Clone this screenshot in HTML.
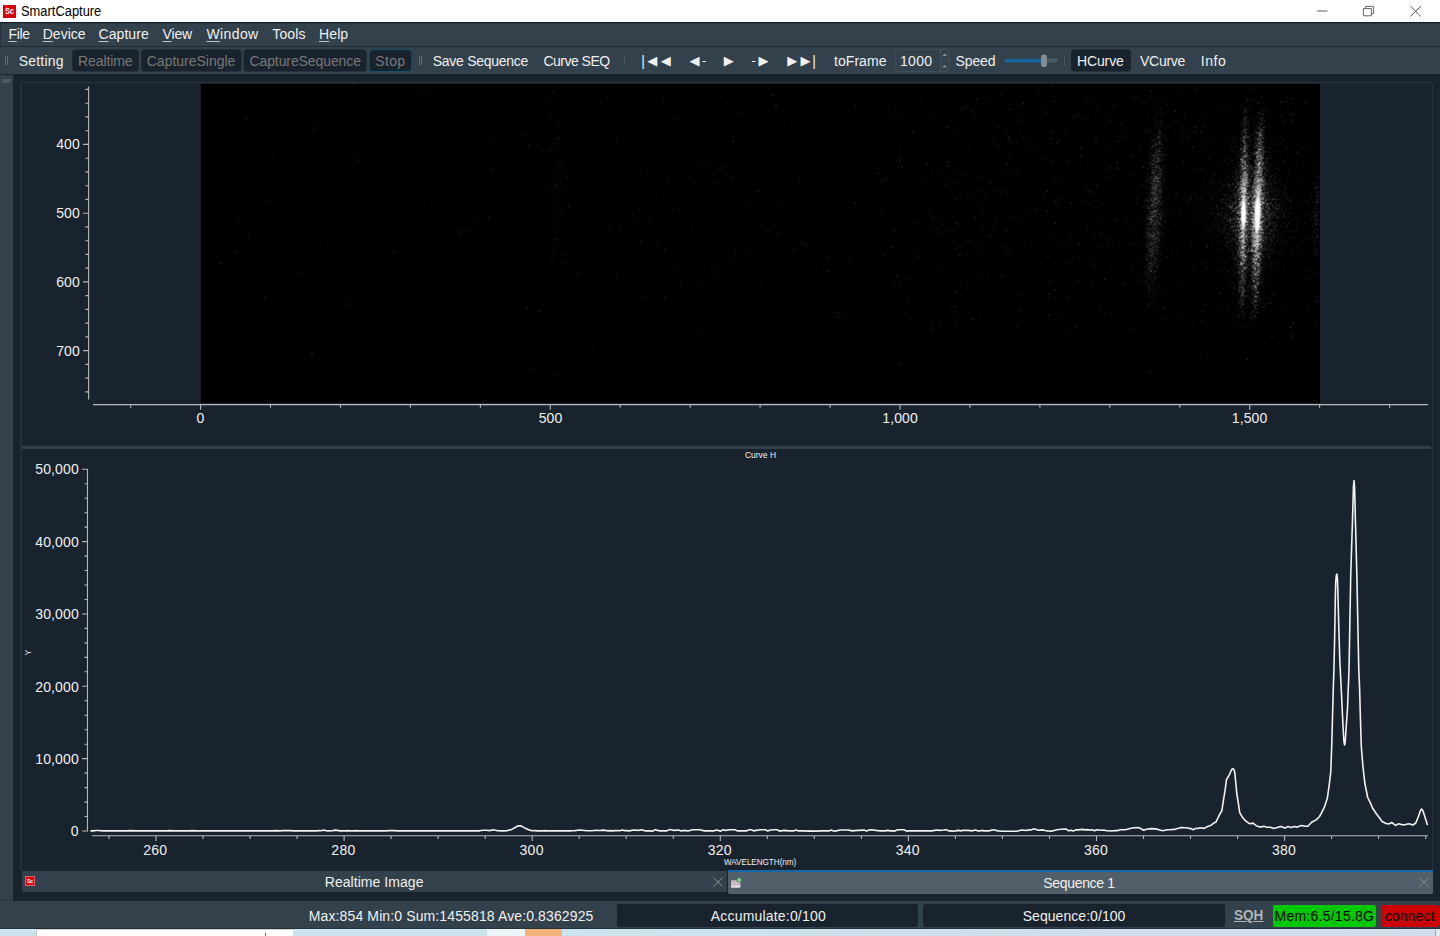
<!DOCTYPE html>
<html lang="en"><head><meta charset="utf-8"><title>SmartCapture</title>
<style>
*{box-sizing:border-box;margin:0;padding:0}
html,body{width:1440px;height:936px;overflow:hidden;background:#19232D;}
body{position:relative;font-family:"Liberation Sans",sans-serif;font-size:14px;color:#F0F0F0;}
.a{position:absolute;white-space:pre;line-height:1}
.d{color:#787878}
.k{color:#000}
.j{font-family:"DejaVu Sans",sans-serif;font-size:13px}
u{text-decoration-thickness:1px;text-underline-offset:1.5px;text-decoration-color:rgba(240,240,240,.75)}
svg{position:absolute;left:0;top:0}
</style></head><body>
<div class="a" style="left:0px;top:0px;width:1440px;height:22px;background:#fff;"></div><div class="a" style="left:0px;top:22px;width:1440px;height:1px;background:#161f27;"></div><div class="a" style="left:0px;top:23px;width:1440px;height:23px;background:#32414B;"></div><div class="a" style="left:0px;top:23px;width:1440px;height:1px;background:#2b3842;"></div><div class="a" style="left:0px;top:46px;width:1440px;height:1px;background:#1f2a33;"></div><div class="a" style="left:0px;top:47px;width:1440px;height:27px;background:#32414B;"></div><div class="a" style="left:0px;top:23px;width:1px;height:23px;background:#26323c;"></div><div class="a" style="left:3px;top:5px;width:13px;height:13px;background:#d9000d;"></div><div class="a" style="left:4.90px;top:7px;transform:scaleX(0.7814);transform-origin:0 0;font-size:9.3px;font-weight:bold;color:#fff;">Sc</div><div class="a k" style="left:20.61px;top:4px;transform:scaleX(0.9213);transform-origin:0 0;">SmartCapture</div>
<div class="a" style="left:0px;top:75px;width:13px;height:825px;background:#32414B;"></div><div class="a" style="left:0px;top:900px;width:13px;height:1px;background:#2b3742;"></div><div class="a" style="left:2px;top:79px;width:9px;height:4px;background:#4c575f;"></div><div class="a" style="left:20px;top:82px;width:1413px;height:790px;border:1px solid #27333e;border-radius:3px"></div><div class="a" style="left:22px;top:446px;width:1409px;height:3px;background:#323f4a;"></div>
<svg width="1440" height="936" viewBox="0 0 1440 936"><rect x="72.2" y="49.4" width="66.6" height="22.2" rx="3.5" fill="#19232D"/><rect x="141.3" y="49.4" width="100.1" height="22.2" rx="3.5" fill="#19232D"/><rect x="243.7" y="49.4" width="122.9" height="22.2" rx="3.5" fill="#19232D"/><rect x="369.2" y="49.7" width="42.6" height="21.8" rx="3.5" fill="#19232D" stroke="#14506E" stroke-width="1"/><rect x="895.7" y="49.2" width="53.2" height="22.2" rx="3" fill="none" stroke="#43525d" stroke-width="1"/><path d="M940.4 49.5V71.2M940.6 60.4H948.8" stroke="#43525d" stroke-width="1" fill="none"/><rect x="1071" y="49.4" width="60" height="22.2" rx="3.5" fill="#19232D"/><rect x="1040" y="58.4" width="17.3" height="4.4" rx="1.5" fill="#4c5c67"/><rect x="1004.8" y="58.9" width="38" height="3.5" rx="1.5" fill="#1464A0"/><rect x="1041" y="54.5" width="5.9" height="12.4" rx="2.6" fill="#868d93"/><path d="M1317 11h10.5" stroke="#666" stroke-width="1" fill="none"/><path d="M1363.4 8.6h8v7.2h-8zM1365.6 8.4v-2h8v7.2h-2" stroke="#555" stroke-width="0.9" fill="none"/><path d="M1410.5 6.2l10.3 10.2M1420.8 6.2l-10.3 10.2" stroke="#444" stroke-width="0.9" fill="none"/><path d="M942.1 56.1l2.5 -2.6l2.5 2.6zM942.1 67.4l2.5 -2.6l2.5 2.6z" fill="#8c8c8c"/><path d="M21.2 85.5V871" stroke="#242f3a" stroke-width="1.6" fill="none"/><rect x="200.8" y="84" width="1119.2" height="318.8" fill="#000"/><defs><radialGradient id="gA"><stop offset="0" stop-color="#fff" stop-opacity="0.04"/><stop offset="0.5" stop-color="#fff" stop-opacity="0.02"/><stop offset="1" stop-color="#fff" stop-opacity="0"/></radialGradient><radialGradient id="gB"><stop offset="0" stop-color="#fff" stop-opacity="0.1"/><stop offset="0.5" stop-color="#fff" stop-opacity="0.06"/><stop offset="1" stop-color="#fff" stop-opacity="0"/></radialGradient><radialGradient id="gC"><stop offset="0" stop-color="#fff" stop-opacity="0.12"/><stop offset="0.5" stop-color="#fff" stop-opacity="0.07"/><stop offset="1" stop-color="#fff" stop-opacity="0"/></radialGradient><radialGradient id="gK"><stop offset="0" stop-color="#fff" stop-opacity="1"/><stop offset="0.5" stop-color="#fff" stop-opacity="1"/><stop offset="0.75" stop-color="#fff" stop-opacity="0.5"/><stop offset="1" stop-color="#fff" stop-opacity="0"/></radialGradient><radialGradient id="gM"><stop offset="0" stop-color="#fff" stop-opacity="0.4"/><stop offset="0.5" stop-color="#fff" stop-opacity="0.24"/><stop offset="1" stop-color="#fff" stop-opacity="0"/></radialGradient><clipPath id="ic"><rect x="200.8" y="84" width="1119.2" height="318.8"/></clipPath></defs><g clip-path="url(#ic)"><ellipse cx="1154.8" cy="205" rx="8" ry="80" fill="url(#gA)" transform="rotate(2.6 1154.8 205)"/><ellipse cx="1243.6" cy="211" rx="6" ry="70" fill="url(#gB)" transform="rotate(1.0 1243.6 211)"/><ellipse cx="1257.8" cy="213" rx="7" ry="75" fill="url(#gC)" transform="rotate(1.7 1257.8 213)"/><ellipse cx="1243.6" cy="213" rx="3.2" ry="48" fill="url(#gM)" transform="rotate(1.0 1243.6 213)"/><ellipse cx="1257.6" cy="214" rx="3.8" ry="52" fill="url(#gM)" transform="rotate(1.7 1257.6 214)"/><ellipse cx="1243.6" cy="213.5" rx="2.9" ry="18" fill="url(#gK)" transform="rotate(1.0 1243.6 213.5)"/><ellipse cx="1257.6" cy="214" rx="3.5" ry="23" fill="url(#gK)" transform="rotate(1.7 1257.6 214)"/><path d="M965 89h.01M1039 90h.01M992 94h.01M1240 95h.01M721 97h.01M1087 98h.01M922 99h.01M1247 99h.01M1247 100h.01M1248 100h.01M1247 101h.01M1010 102h.01M1263 102h.01M1159 103h.01M1161 103h.01M1245 103h.01M1263 103h.01M1258 104h.01M488 105h.01M1158 105h.01M1167 105h.01M1260 105h.01M1278 105h.01M1245 106h.01M1249 106h.01M1155 107h.01M1247 107h.01M1259 107h.01M1161 108h.01M1243 108h.01M1244 108h.01M1246 108h.01M1264 108h.01M1157 109h.01M1160 109h.01M1243 109h.01M1249 109h.01M1262 109h.01M1264 109h.01M1161 110h.01M1244 110h.01M1261 111h.01M1156 112h.01M1164 112h.01M1244 112h.01M1245 112h.01M1259 112h.01M1156 113h.01M1158 113h.01M1161 113h.01M1162 113h.01M1165 113h.01M1244 113h.01M1247 113h.01M1258 113h.01M1259 113h.01M1260 113h.01M1156 114h.01M1242 114h.01M1245 114h.01M1260 114h.01M1261 114h.01M1263 114h.01M1264 114h.01M1157 115h.01M1160 115h.01M1161 115h.01M1163 115h.01M1260 115h.01M1148 116h.01M1261 116h.01M1247 117h.01M1257 117h.01M1259 117h.01M1263 117h.01M326 118h.01M1158 118h.01M1161 118h.01M1243 118h.01M1244 118h.01M1245 118h.01M1246 118h.01M1247 118h.01M1260 118h.01M1261 118h.01M1263 118h.01M1155 119h.01M1245 119h.01M1246 119h.01M1253 119h.01M1258 119h.01M1155 120h.01M1163 120h.01M1245 120h.01M1260 120h.01M1263 120h.01M558 121h.01M1160 121h.01M1162 121h.01M1245 121h.01M1247 121h.01M1248 121h.01M1249 121h.01M1255 121h.01M1257 121h.01M1261 121h.01M1265 121h.01M1152 122h.01M1160 122h.01M1161 122h.01M1241 122h.01M1244 122h.01M1247 122h.01M1258 122h.01M1261 122h.01M1262 122h.01M1264 122h.01M1244 123h.01M1245 123h.01M1254 123h.01M1261 123h.01M1262 123h.01M456 124h.01M558 124h.01M791 124h.01M1155 124h.01M1163 124h.01M1241 124h.01M1243 124h.01M1249 124h.01M1257 124h.01M1267 124h.01M1161 125h.01M1240 125h.01M1243 125h.01M1244 125h.01M1247 125h.01M1256 125h.01M1258 125h.01M1260 125h.01M996 126h.01M1156 126h.01M1242 126h.01M1243 126h.01M1244 126h.01M1247 126h.01M1249 126h.01M1252 126h.01M1258 126h.01M1160 127h.01M1161 127h.01M1242 127h.01M1245 127h.01M1248 127h.01M1259 127h.01M1261 127h.01M1263 127h.01M1269 127h.01M1162 128h.01M1164 128h.01M1245 128h.01M1246 128h.01M1261 128h.01M1263 128h.01M1264 128h.01M1312 128h.01M1165 129h.01M1192 129h.01M1249 129h.01M1256 129h.01M1258 129h.01M1262 129h.01M1265 129h.01M1007 130h.01M1151 130h.01M1158 130h.01M1160 130h.01M1161 130h.01M1242 130h.01M1247 130h.01M1249 130h.01M1250 130h.01M1262 130h.01M1158 131h.01M1162 131h.01M1242 131h.01M1245 131h.01M1254 131h.01M1256 131h.01M1261 131h.01M1262 131h.01M1263 131h.01M1154 132h.01M1160 132h.01M1161 132h.01M1185 132h.01M1241 132h.01M1242 132h.01M1243 132h.01M1253 132h.01M1257 132h.01M1258 132h.01M1259 132h.01M1264 132h.01M1270 132h.01M1019 133h.01M1151 133h.01M1152 133h.01M1155 133h.01M1159 133h.01M1161 133h.01M1248 133h.01M1249 133h.01M1250 133h.01M1256 133h.01M1259 133h.01M1158 134h.01M1159 134h.01M1160 134h.01M1260 134h.01M1261 134h.01M1265 134h.01M1295 134h.01M523 135h.01M1153 135h.01M1156 135h.01M1164 135h.01M1174 135h.01M1241 135h.01M1242 135h.01M1245 135h.01M1246 135h.01M1247 135h.01M1248 135h.01M1251 135h.01M1252 135h.01M1253 135h.01M1258 135h.01M1262 135h.01M1263 135h.01M948 136h.01M1143 136h.01M1157 136h.01M1158 136h.01M1161 136h.01M1248 136h.01M1256 136h.01M1257 136h.01M1263 136h.01M557 137h.01M1152 137h.01M1240 137h.01M1255 137h.01M1258 137h.01M1259 137h.01M1263 137h.01M1155 138h.01M1157 138h.01M1165 138h.01M1229 138h.01M1233 138h.01M1241 138h.01M1243 138h.01M1244 138h.01M1246 138h.01M1248 138h.01M1255 138h.01M1256 138h.01M559 139h.01M1155 139h.01M1156 139h.01M1158 139h.01M1250 139h.01M1254 139h.01M1255 139h.01M1256 139h.01M1257 139h.01M1151 140h.01M1152 140h.01M1154 140h.01M1159 140h.01M1160 140h.01M1161 140h.01M1163 140h.01M1167 140h.01M1244 140h.01M1249 140h.01M1250 140h.01M1254 140h.01M1255 140h.01M1257 140h.01M1259 140h.01M1263 140h.01M1153 141h.01M1154 141h.01M1157 141h.01M1159 141h.01M1236 141h.01M1241 141h.01M1242 141h.01M1245 141h.01M1251 141h.01M1252 141h.01M1255 141h.01M1263 141h.01M1264 141h.01M1156 142h.01M1158 142h.01M1231 142h.01M1234 142h.01M1246 142h.01M1247 142h.01M1249 142h.01M1255 142h.01M1257 142h.01M1258 142h.01M1264 142h.01M1013 143h.01M1152 143h.01M1160 143h.01M1161 143h.01M1234 143h.01M1246 143h.01M1247 143h.01M1263 143h.01M558 144h.01M1093 144h.01M1150 144h.01M1162 144h.01M1163 144h.01M1241 144h.01M1248 144h.01M1252 144h.01M1255 144h.01M1256 144h.01M1258 144h.01M1262 144h.01M1266 144h.01M602 145h.01M1157 145h.01M1162 145h.01M1163 145h.01M1241 145h.01M1244 145h.01M1246 145h.01M1247 145h.01M1253 145h.01M1255 145h.01M1256 145h.01M1259 145h.01M1264 145h.01M552 146h.01M1154 146h.01M1155 146h.01M1158 146h.01M1167 146h.01M1231 146h.01M1237 146h.01M1241 146h.01M1243 146h.01M1250 146h.01M1253 146h.01M1255 146h.01M1259 146h.01M1262 146h.01M1264 146h.01M1149 147h.01M1150 147h.01M1155 147h.01M1160 147h.01M1162 147h.01M1236 147h.01M1241 147h.01M1245 147h.01M1249 147h.01M1258 147h.01M1259 147h.01M1268 147h.01M1269 147h.01M557 148h.01M901 148h.01M1153 148h.01M1154 148h.01M1160 148h.01M1161 148h.01M1162 148h.01M1165 148h.01M1231 148h.01M1253 148h.01M1255 148h.01M1261 148h.01M1266 148h.01M1152 149h.01M1247 149h.01M1248 149h.01M1251 149h.01M1253 149h.01M1256 149h.01M1262 149h.01M1155 150h.01M1157 150h.01M1241 150h.01M1242 150h.01M1243 150h.01M1251 150h.01M1255 150h.01M1261 150h.01M555 151h.01M970 151h.01M1149 151h.01M1156 151h.01M1157 151h.01M1158 151h.01M1164 151h.01M1242 151h.01M1246 151h.01M1249 151h.01M1255 151h.01M1256 151h.01M1262 151h.01M1264 151h.01M1152 152h.01M1154 152h.01M1155 152h.01M1161 152h.01M1163 152h.01M1237 152h.01M1240 152h.01M1245 152h.01M1247 152h.01M1250 152h.01M1253 152h.01M1267 152h.01M1270 152h.01M563 153h.01M1144 153h.01M1151 153h.01M1155 153h.01M1156 153h.01M1159 153h.01M1239 153h.01M1248 153h.01M1253 153h.01M1254 153h.01M1268 153h.01M1149 154h.01M1150 154h.01M1152 154h.01M1155 154h.01M1158 154h.01M1161 154h.01M1166 154h.01M1235 154h.01M1238 154h.01M1252 154h.01M1255 154h.01M1262 154h.01M1153 155h.01M1155 155h.01M1160 155h.01M1161 155h.01M1164 155h.01M1165 155h.01M1168 155h.01M1230 155h.01M1237 155h.01M1250 155h.01M1251 155h.01M1252 155h.01M1265 155h.01M1267 155h.01M1150 156h.01M1156 156h.01M1161 156h.01M1239 156h.01M1241 156h.01M1258 156h.01M1264 156h.01M1270 156h.01M1281 156h.01M1149 157h.01M1151 157h.01M1152 157h.01M1155 157h.01M1156 157h.01M1158 157h.01M1162 157h.01M1164 157h.01M1238 157h.01M1239 157h.01M1241 157h.01M1249 157h.01M1251 157h.01M1256 157h.01M1259 157h.01M1271 157h.01M1160 158h.01M1161 158h.01M1240 158h.01M1242 158h.01M1249 158h.01M1253 158h.01M1265 158h.01M1266 158h.01M1269 158h.01M1271 158h.01M274 159h.01M1154 159h.01M1159 159h.01M1160 159h.01M1226 159h.01M1235 159h.01M1237 159h.01M1240 159h.01M1243 159h.01M1245 159h.01M1251 159h.01M1255 159h.01M1262 159h.01M1268 159h.01M558 160h.01M908 160h.01M1149 160h.01M1161 160h.01M1164 160h.01M1223 160h.01M1236 160h.01M1244 160h.01M1248 160h.01M1253 160h.01M1254 160h.01M1255 160h.01M1257 160h.01M1260 160h.01M1268 160h.01M1274 160h.01M558 161h.01M561 161h.01M1240 161h.01M1246 161h.01M1247 161h.01M1254 161h.01M1264 161h.01M1266 161h.01M1267 161h.01M1273 161h.01M1150 162h.01M1151 162h.01M1152 162h.01M1155 162h.01M1157 162h.01M1159 162h.01M1225 162h.01M1239 162h.01M1240 162h.01M1247 162h.01M1248 162h.01M1249 162h.01M1254 162h.01M1261 162h.01M1265 162h.01M1268 162h.01M1283 162h.01M560 163h.01M1147 163h.01M1155 163h.01M1237 163h.01M1238 163h.01M1241 163h.01M1248 163h.01M1249 163h.01M1253 163h.01M1267 163h.01M1279 163h.01M559 164h.01M1087 164h.01M1151 164h.01M1154 164h.01M1155 164h.01M1158 164h.01M1162 164h.01M1229 164h.01M1244 164h.01M1247 164h.01M1248 164h.01M1249 164h.01M1264 164h.01M1267 164h.01M1272 164h.01M1221 165h.01M1239 165h.01M1242 165h.01M1248 165h.01M1250 165h.01M1252 165h.01M1254 165h.01M1263 165h.01M1264 165h.01M559 166h.01M725 166h.01M1154 166h.01M1160 166h.01M1165 166h.01M1228 166h.01M1234 166h.01M1239 166h.01M1240 166h.01M1248 166h.01M1249 166h.01M1252 166h.01M1257 166h.01M1262 166h.01M1267 166h.01M1269 166h.01M1271 166h.01M1316 166h.01M1111 167h.01M1151 167h.01M1152 167h.01M1155 167h.01M1162 167h.01M1164 167h.01M1250 167h.01M1253 167h.01M1254 167h.01M1262 167h.01M1265 167h.01M1268 167h.01M557 168h.01M563 168h.01M704 168h.01M1148 168h.01M1149 168h.01M1151 168h.01M1152 168h.01M1231 168h.01M1237 168h.01M1247 168h.01M1251 168h.01M1252 168h.01M1255 168h.01M1257 168h.01M1258 168h.01M1263 168h.01M1267 168h.01M1270 168h.01M1278 168h.01M1309 168h.01M1315 168h.01M322 169h.01M995 169h.01M1148 169h.01M1153 169h.01M1162 169h.01M1163 169h.01M1237 169h.01M1246 169h.01M1247 169h.01M1250 169h.01M1252 169h.01M1256 169h.01M1263 169h.01M1264 169h.01M1265 169h.01M1275 169h.01M1151 170h.01M1154 170h.01M1155 170h.01M1161 170h.01M1162 170h.01M1237 170h.01M1243 170h.01M1251 170h.01M1252 170h.01M1256 170h.01M1261 170h.01M1268 170h.01M1273 170h.01M553 171h.01M932 171h.01M956 171h.01M1156 171h.01M1158 171h.01M1161 171h.01M1165 171h.01M1233 171h.01M1239 171h.01M1240 171h.01M1243 171h.01M1244 171h.01M1247 171h.01M1250 171h.01M1254 171h.01M1260 171h.01M1264 171h.01M1266 171h.01M1158 172h.01M1163 172h.01M1235 172h.01M1247 172h.01M1248 172h.01M1250 172h.01M1255 172h.01M1260 172h.01M1269 172h.01M1272 172h.01M1274 172h.01M1289 172h.01M1148 173h.01M1152 173h.01M1155 173h.01M1159 173h.01M1161 173h.01M1162 173h.01M1164 173h.01M1227 173h.01M1233 173h.01M1234 173h.01M1235 173h.01M1236 173h.01M1238 173h.01M1242 173h.01M1248 173h.01M1250 173h.01M1251 173h.01M1252 173h.01M1253 173h.01M1254 173h.01M1275 173h.01M1276 173h.01M491 174h.01M1148 174h.01M1152 174h.01M1156 174h.01M1159 174h.01M1161 174h.01M1162 174h.01M1236 174h.01M1237 174h.01M1244 174h.01M1250 174h.01M1254 174h.01M1263 174h.01M1266 174h.01M1269 174h.01M1315 174h.01M560 175h.01M1153 175h.01M1155 175h.01M1158 175h.01M1162 175h.01M1235 175h.01M1240 175h.01M1241 175h.01M1246 175h.01M1264 175h.01M1265 175h.01M1272 175h.01M1137 176h.01M1147 176h.01M1148 176h.01M1151 176h.01M1152 176h.01M1154 176h.01M1163 176h.01M1226 176h.01M1233 176h.01M1236 176h.01M1237 176h.01M1239 176h.01M1244 176h.01M1247 176h.01M1250 176h.01M1252 176h.01M1253 176h.01M1254 176h.01M1259 176h.01M1275 176h.01M1317 176h.01M1319 176h.01M556 177h.01M559 177h.01M1108 177h.01M1148 177h.01M1152 177h.01M1154 177h.01M1160 177h.01M1163 177h.01M1228 177h.01M1229 177h.01M1233 177h.01M1236 177h.01M1249 177h.01M1267 177h.01M1269 177h.01M1270 177h.01M1272 177h.01M1301 177h.01M1317 177h.01M563 178h.01M1147 178h.01M1150 178h.01M1155 178h.01M1159 178h.01M1234 178h.01M1236 178h.01M1237 178h.01M1240 178h.01M1242 178h.01M1249 178h.01M1252 178h.01M1260 178h.01M1263 178h.01M1266 178h.01M1271 178h.01M1286 178h.01M1319 178h.01M557 179h.01M1149 179h.01M1150 179h.01M1151 179h.01M1152 179h.01M1163 179h.01M1164 179h.01M1234 179h.01M1240 179h.01M1251 179h.01M1252 179h.01M1264 179h.01M1265 179h.01M1273 179h.01M1276 179h.01M1281 179h.01M558 180h.01M1147 180h.01M1152 180h.01M1154 180h.01M1155 180h.01M1156 180h.01M1234 180h.01M1246 180h.01M1251 180h.01M1254 180h.01M1264 180h.01M1268 180h.01M1269 180h.01M1270 180h.01M1277 180h.01M1285 180h.01M988 181h.01M1063 181h.01M1088 181h.01M1148 181h.01M1149 181h.01M1152 181h.01M1153 181h.01M1161 181h.01M1163 181h.01M1165 181h.01M1205 181h.01M1239 181h.01M1245 181h.01M1251 181h.01M1255 181h.01M1256 181h.01M1261 181h.01M1266 181h.01M1319 181h.01M555 182h.01M1147 182h.01M1152 182h.01M1156 182h.01M1159 182h.01M1220 182h.01M1225 182h.01M1227 182h.01M1232 182h.01M1233 182h.01M1237 182h.01M1244 182h.01M1248 182h.01M1250 182h.01M1252 182h.01M1258 182h.01M1262 182h.01M1266 182h.01M1271 182h.01M1274 182h.01M1275 182h.01M1281 182h.01M1316 182h.01M800 183h.01M1148 183h.01M1158 183h.01M1159 183h.01M1162 183h.01M1220 183h.01M1228 183h.01M1233 183h.01M1237 183h.01M1238 183h.01M1242 183h.01M1254 183h.01M1256 183h.01M1269 183h.01M1272 183h.01M1274 183h.01M1277 183h.01M1298 183h.01M1313 183h.01M1317 183h.01M560 184h.01M1154 184h.01M1155 184h.01M1157 184h.01M1159 184h.01M1160 184h.01M1161 184h.01M1211 184h.01M1214 184h.01M1223 184h.01M1228 184h.01M1232 184h.01M1235 184h.01M1240 184h.01M1247 184h.01M1250 184h.01M1252 184h.01M1253 184h.01M1255 184h.01M1259 184h.01M1265 184h.01M1268 184h.01M1284 184h.01M1299 184h.01M1154 185h.01M1156 185h.01M1160 185h.01M1161 185h.01M1164 185h.01M1223 185h.01M1225 185h.01M1233 185h.01M1236 185h.01M1237 185h.01M1267 185h.01M1268 185h.01M1271 185h.01M1272 185h.01M1275 185h.01M1281 185h.01M1284 185h.01M1286 185h.01M1291 185h.01M1317 185h.01M1150 186h.01M1152 186h.01M1154 186h.01M1155 186h.01M1156 186h.01M1160 186h.01M1162 186h.01M1163 186h.01M1215 186h.01M1222 186h.01M1226 186h.01M1229 186h.01M1230 186h.01M1233 186h.01M1238 186h.01M1242 186h.01M1245 186h.01M1248 186h.01M1251 186h.01M1252 186h.01M1257 186h.01M1262 186h.01M1265 186h.01M1266 186h.01M1272 186h.01M1147 187h.01M1149 187h.01M1155 187h.01M1164 187h.01M1201 187h.01M1222 187h.01M1228 187h.01M1229 187h.01M1237 187h.01M1242 187h.01M1251 187h.01M1263 187h.01M1269 187h.01M1271 187h.01M1272 187h.01M1276 187h.01M1278 187h.01M1285 187h.01M1315 187h.01M1316 187h.01M1317 187h.01M1318 187h.01M557 188h.01M558 188h.01M563 188h.01M1083 188h.01M1152 188h.01M1154 188h.01M1158 188h.01M1161 188h.01M1206 188h.01M1228 188h.01M1229 188h.01M1234 188h.01M1236 188h.01M1248 188h.01M1278 188h.01M1286 188h.01M1315 188h.01M1316 188h.01M1317 188h.01M1318 188h.01M551 189h.01M1150 189h.01M1151 189h.01M1154 189h.01M1156 189h.01M1157 189h.01M1159 189h.01M1167 189h.01M1221 189h.01M1222 189h.01M1225 189h.01M1237 189h.01M1247 189h.01M1249 189h.01M1251 189h.01M1268 189h.01M1269 189h.01M1271 189h.01M1274 189h.01M1276 189h.01M1287 189h.01M1316 189h.01M1151 190h.01M1162 190h.01M1237 190h.01M1250 190h.01M1265 190h.01M1266 190h.01M1274 190h.01M1285 190h.01M981 191h.01M1153 191h.01M1155 191h.01M1158 191h.01M1159 191h.01M1220 191h.01M1226 191h.01M1234 191h.01M1238 191h.01M1239 191h.01M1252 191h.01M1258 191h.01M1265 191h.01M1268 191h.01M1270 191h.01M1272 191h.01M1273 191h.01M1280 191h.01M1317 191h.01M1318 191h.01M561 192h.01M1149 192h.01M1157 192h.01M1163 192h.01M1231 192h.01M1240 192h.01M1248 192h.01M1272 192h.01M1274 192h.01M1285 192h.01M1318 192h.01M1150 193h.01M1151 193h.01M1155 193h.01M1157 193h.01M1202 193h.01M1218 193h.01M1228 193h.01M1250 193h.01M1269 193h.01M1272 193h.01M1278 193h.01M1279 193h.01M1284 193h.01M1285 193h.01M1286 193h.01M1294 193h.01M1315 193h.01M1145 194h.01M1152 194h.01M1213 194h.01M1215 194h.01M1221 194h.01M1223 194h.01M1224 194h.01M1235 194h.01M1238 194h.01M1243 194h.01M1246 194h.01M1248 194h.01M1251 194h.01M1254 194h.01M1256 194h.01M1265 194h.01M1266 194h.01M1276 194h.01M1280 194h.01M1287 194h.01M1317 194h.01M1318 194h.01M1148 195h.01M1150 195h.01M1152 195h.01M1153 195h.01M1154 195h.01M1161 195h.01M1208 195h.01M1211 195h.01M1228 195h.01M1229 195h.01M1230 195h.01M1233 195h.01M1247 195h.01M1260 195h.01M1265 195h.01M1268 195h.01M1272 195h.01M1275 195h.01M1279 195h.01M1285 195h.01M1318 195h.01M1319 195h.01M657 196h.01M1056 196h.01M1146 196h.01M1152 196h.01M1153 196h.01M1157 196h.01M1161 196h.01M1163 196h.01M1224 196h.01M1225 196h.01M1231 196h.01M1236 196h.01M1239 196h.01M1240 196h.01M1241 196h.01M1261 196h.01M1264 196h.01M1267 196h.01M1268 196h.01M1269 196h.01M1272 196h.01M1275 196h.01M1278 196h.01M1283 196h.01M1284 196h.01M1287 196h.01M1288 196h.01M1294 196h.01M1317 196h.01M1318 196h.01M1319 196h.01M559 197h.01M1149 197h.01M1150 197h.01M1153 197h.01M1154 197h.01M1156 197h.01M1159 197h.01M1160 197h.01M1204 197h.01M1210 197h.01M1216 197h.01M1231 197h.01M1233 197h.01M1234 197h.01M1261 197h.01M1264 197h.01M1268 197h.01M1273 197h.01M1274 197h.01M1281 197h.01M1317 197h.01M1318 197h.01M557 198h.01M1148 198h.01M1149 198h.01M1150 198h.01M1151 198h.01M1152 198h.01M1154 198h.01M1156 198h.01M1159 198h.01M1226 198h.01M1228 198h.01M1258 198h.01M1260 198h.01M1269 198h.01M1274 198h.01M1279 198h.01M1286 198h.01M1287 198h.01M1291 198h.01M1044 199h.01M1147 199h.01M1152 199h.01M1153 199h.01M1154 199h.01M1157 199h.01M1223 199h.01M1227 199h.01M1229 199h.01M1231 199h.01M1235 199h.01M1236 199h.01M1238 199h.01M1264 199h.01M1267 199h.01M1271 199h.01M1272 199h.01M1275 199h.01M1280 199h.01M1288 199h.01M1290 199h.01M1295 199h.01M1317 199h.01M1318 199h.01M835 200h.01M1084 200h.01M1106 200h.01M1147 200h.01M1151 200h.01M1154 200h.01M1158 200h.01M1217 200h.01M1221 200h.01M1222 200h.01M1226 200h.01M1228 200h.01M1231 200h.01M1237 200h.01M1239 200h.01M1251 200h.01M1252 200h.01M1254 200h.01M1261 200h.01M1275 200h.01M1279 200h.01M1286 200h.01M1287 200h.01M1316 200h.01M1318 200h.01M556 201h.01M1146 201h.01M1153 201h.01M1156 201h.01M1158 201h.01M1162 201h.01M1163 201h.01M1214 201h.01M1221 201h.01M1224 201h.01M1243 201h.01M1253 201h.01M1265 201h.01M1266 201h.01M1269 201h.01M1270 201h.01M1272 201h.01M1275 201h.01M1283 201h.01M1292 201h.01M1319 201h.01M562 202h.01M1147 202h.01M1159 202h.01M1161 202h.01M1162 202h.01M1225 202h.01M1227 202h.01M1235 202h.01M1236 202h.01M1248 202h.01M1249 202h.01M1251 202h.01M1263 202h.01M1266 202h.01M1267 202h.01M1269 202h.01M1270 202h.01M1271 202h.01M1276 202h.01M1283 202h.01M1290 202h.01M1305 202h.01M1318 202h.01M1319 202h.01M811 203h.01M1149 203h.01M1151 203h.01M1154 203h.01M1158 203h.01M1160 203h.01M1162 203h.01M1193 203h.01M1202 203h.01M1221 203h.01M1224 203h.01M1226 203h.01M1227 203h.01M1229 203h.01M1232 203h.01M1242 203h.01M1251 203h.01M1261 203h.01M1266 203h.01M1274 203h.01M1275 203h.01M1276 203h.01M1279 203h.01M1283 203h.01M1287 203h.01M1316 203h.01M1319 203h.01M431 204h.01M554 204h.01M1149 204h.01M1158 204h.01M1160 204h.01M1220 204h.01M1222 204h.01M1227 204h.01M1229 204h.01M1231 204h.01M1232 204h.01M1237 204h.01M1238 204h.01M1251 204h.01M1264 204h.01M1271 204h.01M1274 204h.01M1308 204h.01M1316 204h.01M1038 205h.01M1147 205h.01M1151 205h.01M1154 205h.01M1159 205h.01M1162 205h.01M1163 205h.01M1166 205h.01M1228 205h.01M1230 205h.01M1234 205h.01M1242 205h.01M1250 205h.01M1251 205h.01M1264 205h.01M1268 205h.01M1276 205h.01M1277 205h.01M1279 205h.01M1282 205h.01M1289 205h.01M1315 205h.01M1318 205h.01M680 206h.01M1148 206h.01M1152 206h.01M1156 206h.01M1158 206h.01M1195 206h.01M1210 206h.01M1222 206h.01M1232 206h.01M1233 206h.01M1237 206h.01M1245 206h.01M1249 206h.01M1251 206h.01M1261 206h.01M1264 206h.01M1267 206h.01M1276 206h.01M1277 206h.01M1279 206h.01M1282 206h.01M1066 207h.01M1152 207h.01M1154 207h.01M1156 207h.01M1206 207h.01M1217 207h.01M1222 207h.01M1226 207h.01M1227 207h.01M1228 207h.01M1237 207h.01M1239 207h.01M1241 207h.01M1249 207h.01M1261 207h.01M1263 207h.01M1267 207h.01M1268 207h.01M1273 207h.01M1274 207h.01M1279 207h.01M1280 207h.01M1291 207h.01M1297 207h.01M552 208h.01M996 208h.01M1050 208h.01M1147 208h.01M1148 208h.01M1150 208h.01M1151 208h.01M1157 208h.01M1163 208h.01M1211 208h.01M1214 208h.01M1223 208h.01M1225 208h.01M1233 208h.01M1234 208h.01M1235 208h.01M1237 208h.01M1239 208h.01M1245 208h.01M1246 208h.01M1248 208h.01M1253 208h.01M1265 208h.01M1270 208h.01M1282 208h.01M1286 208h.01M1291 208h.01M1294 208h.01M1316 208h.01M1317 208h.01M1149 209h.01M1152 209h.01M1160 209h.01M1168 209h.01M1218 209h.01M1225 209h.01M1227 209h.01M1231 209h.01M1233 209h.01M1236 209h.01M1239 209h.01M1264 209h.01M1266 209h.01M1272 209h.01M1273 209h.01M1275 209h.01M1282 209h.01M1314 209h.01M555 210h.01M662 210h.01M929 210h.01M1148 210h.01M1149 210h.01M1154 210h.01M1155 210h.01M1156 210h.01M1209 210h.01M1218 210h.01M1224 210h.01M1227 210h.01M1229 210h.01M1231 210h.01M1238 210h.01M1241 210h.01M1242 210h.01M1246 210h.01M1263 210h.01M1265 210h.01M1269 210h.01M1283 210h.01M553 211h.01M561 211h.01M1148 211h.01M1149 211h.01M1152 211h.01M1153 211h.01M1163 211h.01M1169 211h.01M1206 211h.01M1227 211h.01M1229 211h.01M1232 211h.01M1240 211h.01M1243 211h.01M1248 211h.01M1249 211h.01M1268 211h.01M1272 211h.01M1278 211h.01M1286 211h.01M1314 211h.01M1315 211h.01M1317 211h.01M1319 211h.01M1144 212h.01M1154 212h.01M1155 212h.01M1157 212h.01M1162 212h.01M1163 212h.01M1224 212h.01M1226 212h.01M1231 212h.01M1237 212h.01M1239 212h.01M1245 212h.01M1246 212h.01M1250 212h.01M1253 212h.01M1254 212h.01M1255 212h.01M1262 212h.01M1264 212h.01M1269 212h.01M1275 212h.01M1276 212h.01M1281 212h.01M1284 212h.01M1316 212h.01M1031 213h.01M1033 213h.01M1058 213h.01M1148 213h.01M1150 213h.01M1153 213h.01M1154 213h.01M1155 213h.01M1156 213h.01M1158 213h.01M1159 213h.01M1160 213h.01M1162 213h.01M1167 213h.01M1171 213h.01M1210 213h.01M1212 213h.01M1214 213h.01M1219 213h.01M1222 213h.01M1234 213h.01M1251 213h.01M1265 213h.01M1267 213h.01M1269 213h.01M1270 213h.01M1274 213h.01M1275 213h.01M1276 213h.01M1284 213h.01M1289 213h.01M1290 213h.01M1293 213h.01M1312 213h.01M557 214h.01M1155 214h.01M1157 214h.01M1159 214h.01M1162 214h.01M1163 214h.01M1206 214h.01M1208 214h.01M1209 214h.01M1234 214h.01M1236 214h.01M1238 214h.01M1245 214h.01M1250 214h.01M1259 214h.01M1263 214h.01M1265 214h.01M1266 214h.01M1267 214h.01M1270 214h.01M1272 214h.01M1275 214h.01M1280 214h.01M1291 214h.01M1307 214h.01M1312 214h.01M1315 214h.01M1317 214h.01M1319 214h.01M824 215h.01M1146 215h.01M1148 215h.01M1149 215h.01M1153 215h.01M1156 215h.01M1163 215h.01M1180 215h.01M1193 215h.01M1214 215h.01M1220 215h.01M1222 215h.01M1225 215h.01M1229 215h.01M1238 215h.01M1241 215h.01M1249 215h.01M1252 215h.01M1254 215h.01M1262 215h.01M1263 215h.01M1270 215h.01M1271 215h.01M1277 215h.01M1284 215h.01M1315 215h.01M1317 215h.01M1150 216h.01M1202 216h.01M1218 216h.01M1221 216h.01M1223 216h.01M1225 216h.01M1226 216h.01M1234 216h.01M1238 216h.01M1239 216h.01M1240 216h.01M1247 216h.01M1262 216h.01M1266 216h.01M1269 216h.01M1271 216h.01M1272 216h.01M1274 216h.01M1275 216h.01M1276 216h.01M1283 216h.01M1290 216h.01M1038 217h.01M1149 217h.01M1156 217h.01M1161 217h.01M1162 217h.01M1208 217h.01M1215 217h.01M1226 217h.01M1229 217h.01M1238 217h.01M1250 217h.01M1254 217h.01M1265 217h.01M1266 217h.01M1267 217h.01M1272 217h.01M1275 217h.01M1279 217h.01M1284 217h.01M1285 217h.01M1286 217h.01M1295 217h.01M1312 217h.01M1314 217h.01M1124 218h.01M1142 218h.01M1147 218h.01M1148 218h.01M1149 218h.01M1150 218h.01M1152 218h.01M1155 218h.01M1158 218h.01M1162 218h.01M1174 218h.01M1218 218h.01M1220 218h.01M1224 218h.01M1228 218h.01M1230 218h.01M1235 218h.01M1239 218h.01M1251 218h.01M1254 218h.01M1262 218h.01M1266 218h.01M1269 218h.01M1270 218h.01M1279 218h.01M1283 218h.01M1288 218h.01M1149 219h.01M1150 219h.01M1157 219h.01M1158 219h.01M1160 219h.01M1161 219h.01M1221 219h.01M1222 219h.01M1223 219h.01M1225 219h.01M1229 219h.01M1235 219h.01M1237 219h.01M1243 219h.01M1245 219h.01M1254 219h.01M1257 219h.01M1260 219h.01M1261 219h.01M1265 219h.01M1267 219h.01M1315 219h.01M1316 219h.01M1317 219h.01M558 220h.01M1151 220h.01M1156 220h.01M1159 220h.01M1164 220h.01M1200 220h.01M1215 220h.01M1223 220h.01M1224 220h.01M1227 220h.01M1228 220h.01M1231 220h.01M1233 220h.01M1234 220h.01M1240 220h.01M1248 220h.01M1249 220h.01M1252 220h.01M1256 220h.01M1258 220h.01M1263 220h.01M1272 220h.01M1287 220h.01M1292 220h.01M1294 220h.01M1298 220h.01M1311 220h.01M1314 220h.01M1316 220h.01M1023 221h.01M1150 221h.01M1155 221h.01M1156 221h.01M1159 221h.01M1161 221h.01M1218 221h.01M1232 221h.01M1233 221h.01M1238 221h.01M1246 221h.01M1250 221h.01M1269 221h.01M1272 221h.01M1273 221h.01M1279 221h.01M1281 221h.01M1315 221h.01M1316 221h.01M1318 221h.01M1319 221h.01M925 222h.01M1144 222h.01M1149 222h.01M1152 222h.01M1153 222h.01M1158 222h.01M1159 222h.01M1160 222h.01M1163 222h.01M1213 222h.01M1221 222h.01M1222 222h.01M1224 222h.01M1227 222h.01M1230 222h.01M1231 222h.01M1243 222h.01M1263 222h.01M1265 222h.01M1268 222h.01M1274 222h.01M1282 222h.01M1298 222h.01M1316 222h.01M1318 222h.01M554 223h.01M559 223h.01M915 223h.01M1149 223h.01M1153 223h.01M1154 223h.01M1158 223h.01M1198 223h.01M1212 223h.01M1217 223h.01M1224 223h.01M1230 223h.01M1238 223h.01M1242 223h.01M1246 223h.01M1248 223h.01M1249 223h.01M1262 223h.01M1265 223h.01M1266 223h.01M1269 223h.01M1271 223h.01M1272 223h.01M1273 223h.01M1274 223h.01M1275 223h.01M1276 223h.01M1278 223h.01M1316 223h.01M1149 224h.01M1150 224h.01M1157 224h.01M1188 224h.01M1220 224h.01M1224 224h.01M1226 224h.01M1231 224h.01M1234 224h.01M1237 224h.01M1245 224h.01M1249 224h.01M1251 224h.01M1260 224h.01M1268 224h.01M1276 224h.01M1288 224h.01M1294 224h.01M1318 224h.01M1319 224h.01M560 225h.01M1145 225h.01M1148 225h.01M1149 225h.01M1151 225h.01M1157 225h.01M1163 225h.01M1175 225h.01M1220 225h.01M1224 225h.01M1225 225h.01M1233 225h.01M1236 225h.01M1263 225h.01M1265 225h.01M1268 225h.01M1269 225h.01M1271 225h.01M1274 225h.01M1276 225h.01M1277 225h.01M1278 225h.01M1313 225h.01M1316 225h.01M1317 225h.01M1319 225h.01M983 226h.01M1154 226h.01M1212 226h.01M1225 226h.01M1235 226h.01M1239 226h.01M1242 226h.01M1245 226h.01M1247 226h.01M1249 226h.01M1250 226h.01M1263 226h.01M1265 226h.01M1268 226h.01M1273 226h.01M1274 226h.01M1276 226h.01M1282 226h.01M1286 226h.01M1298 226h.01M1312 226h.01M1313 226h.01M1316 226h.01M556 227h.01M1151 227h.01M1152 227h.01M1154 227h.01M1158 227h.01M1225 227h.01M1228 227h.01M1230 227h.01M1231 227h.01M1236 227h.01M1237 227h.01M1240 227h.01M1246 227h.01M1248 227h.01M1249 227h.01M1252 227h.01M1256 227h.01M1265 227h.01M1266 227h.01M1279 227h.01M1287 227h.01M692 228h.01M955 228h.01M1147 228h.01M1149 228h.01M1150 228h.01M1152 228h.01M1153 228h.01M1154 228h.01M1156 228h.01M1157 228h.01M1162 228h.01M1212 228h.01M1225 228h.01M1230 228h.01M1237 228h.01M1251 228h.01M1263 228h.01M1264 228h.01M1265 228h.01M1269 228h.01M1270 228h.01M1274 228h.01M1297 228h.01M1315 228h.01M1318 228h.01M553 229h.01M1147 229h.01M1148 229h.01M1150 229h.01M1151 229h.01M1156 229h.01M1220 229h.01M1223 229h.01M1225 229h.01M1226 229h.01M1228 229h.01M1229 229h.01M1230 229h.01M1234 229h.01M1236 229h.01M1240 229h.01M1249 229h.01M1268 229h.01M1270 229h.01M1271 229h.01M1286 229h.01M1296 229h.01M1315 229h.01M1317 229h.01M1102 230h.01M1144 230h.01M1210 230h.01M1216 230h.01M1224 230h.01M1225 230h.01M1231 230h.01M1233 230h.01M1250 230h.01M1259 230h.01M1266 230h.01M1267 230h.01M1272 230h.01M1277 230h.01M1278 230h.01M1280 230h.01M1289 230h.01M1293 230h.01M1314 230h.01M1318 230h.01M947 231h.01M1147 231h.01M1156 231h.01M1161 231h.01M1219 231h.01M1223 231h.01M1234 231h.01M1244 231h.01M1249 231h.01M1260 231h.01M1264 231h.01M1265 231h.01M1267 231h.01M1268 231h.01M1276 231h.01M1277 231h.01M1285 231h.01M1294 231h.01M1314 231h.01M308 232h.01M557 232h.01M1146 232h.01M1147 232h.01M1152 232h.01M1154 232h.01M1157 232h.01M1224 232h.01M1228 232h.01M1237 232h.01M1245 232h.01M1247 232h.01M1266 232h.01M1270 232h.01M1277 232h.01M1294 232h.01M1145 233h.01M1148 233h.01M1155 233h.01M1156 233h.01M1157 233h.01M1161 233h.01M1162 233h.01M1206 233h.01M1209 233h.01M1222 233h.01M1228 233h.01M1233 233h.01M1234 233h.01M1236 233h.01M1249 233h.01M1256 233h.01M1260 233h.01M1271 233h.01M1284 233h.01M1314 233h.01M1315 233h.01M1153 234h.01M1154 234h.01M1156 234h.01M1157 234h.01M1159 234h.01M1201 234h.01M1227 234h.01M1233 234h.01M1239 234h.01M1241 234h.01M1245 234h.01M1254 234h.01M1256 234h.01M1259 234h.01M1262 234h.01M1267 234h.01M1268 234h.01M1271 234h.01M1278 234h.01M1283 234h.01M1286 234h.01M1317 234h.01M1143 235h.01M1155 235h.01M1157 235h.01M1158 235h.01M1215 235h.01M1219 235h.01M1227 235h.01M1229 235h.01M1232 235h.01M1234 235h.01M1235 235h.01M1245 235h.01M1248 235h.01M1257 235h.01M1262 235h.01M1270 235h.01M1274 235h.01M1275 235h.01M1280 235h.01M1282 235h.01M1318 235h.01M1150 236h.01M1154 236h.01M1156 236h.01M1236 236h.01M1248 236h.01M1250 236h.01M1263 236h.01M1266 236h.01M1268 236h.01M1269 236h.01M1270 236h.01M1273 236h.01M1282 236h.01M1288 236h.01M1312 236h.01M1313 236h.01M1317 236h.01M554 237h.01M1144 237h.01M1149 237h.01M1150 237h.01M1155 237h.01M1156 237h.01M1158 237h.01M1160 237h.01M1164 237h.01M1216 237h.01M1225 237h.01M1227 237h.01M1228 237h.01M1236 237h.01M1237 237h.01M1239 237h.01M1267 237h.01M1273 237h.01M1278 237h.01M1279 237h.01M1281 237h.01M1315 237h.01M1317 237h.01M557 238h.01M1148 238h.01M1151 238h.01M1153 238h.01M1208 238h.01M1213 238h.01M1225 238h.01M1232 238h.01M1233 238h.01M1236 238h.01M1237 238h.01M1240 238h.01M1247 238h.01M1249 238h.01M1250 238h.01M1263 238h.01M1268 238h.01M1270 238h.01M1273 238h.01M1274 238h.01M1275 238h.01M1289 238h.01M556 239h.01M1107 239h.01M1148 239h.01M1149 239h.01M1151 239h.01M1152 239h.01M1153 239h.01M1159 239h.01M1160 239h.01M1233 239h.01M1235 239h.01M1240 239h.01M1241 239h.01M1242 239h.01M1243 239h.01M1248 239h.01M1256 239h.01M1265 239h.01M1268 239h.01M1269 239h.01M1270 239h.01M1279 239h.01M1296 239h.01M1314 239h.01M553 240h.01M974 240h.01M1147 240h.01M1148 240h.01M1151 240h.01M1152 240h.01M1156 240h.01M1157 240h.01M1160 240h.01M1227 240h.01M1231 240h.01M1232 240h.01M1241 240h.01M1245 240h.01M1252 240h.01M1256 240h.01M1259 240h.01M1262 240h.01M1265 240h.01M1271 240h.01M1277 240h.01M1278 240h.01M1282 240h.01M1150 241h.01M1156 241h.01M1157 241h.01M1159 241h.01M1218 241h.01M1222 241h.01M1230 241h.01M1232 241h.01M1235 241h.01M1236 241h.01M1251 241h.01M1267 241h.01M1272 241h.01M1277 241h.01M1286 241h.01M1287 241h.01M1314 241h.01M1315 241h.01M1140 242h.01M1147 242h.01M1148 242h.01M1150 242h.01M1157 242h.01M1158 242h.01M1159 242h.01M1161 242h.01M1163 242h.01M1231 242h.01M1233 242h.01M1235 242h.01M1236 242h.01M1248 242h.01M1260 242h.01M1265 242h.01M1267 242h.01M1272 242h.01M1279 242h.01M1284 242h.01M1315 242h.01M1134 243h.01M1144 243h.01M1151 243h.01M1158 243h.01M1222 243h.01M1225 243h.01M1241 243h.01M1243 243h.01M1248 243h.01M1249 243h.01M1251 243h.01M1252 243h.01M1260 243h.01M1264 243h.01M1266 243h.01M1269 243h.01M1271 243h.01M1273 243h.01M1278 243h.01M1313 243h.01M1315 243h.01M1319 243h.01M327 244h.01M1148 244h.01M1150 244h.01M1153 244h.01M1158 244h.01M1222 244h.01M1226 244h.01M1243 244h.01M1246 244h.01M1251 244h.01M1252 244h.01M1255 244h.01M1270 244h.01M1274 244h.01M1275 244h.01M557 245h.01M1144 245h.01M1146 245h.01M1147 245h.01M1163 245h.01M1194 245h.01M1211 245h.01M1224 245h.01M1226 245h.01M1230 245h.01M1232 245h.01M1233 245h.01M1235 245h.01M1238 245h.01M1239 245h.01M1241 245h.01M1245 245h.01M1249 245h.01M1264 245h.01M1271 245h.01M1275 245h.01M1286 245h.01M1315 245h.01M1319 245h.01M1149 246h.01M1161 246h.01M1226 246h.01M1227 246h.01M1232 246h.01M1235 246h.01M1239 246h.01M1248 246h.01M1249 246h.01M1267 246h.01M1269 246h.01M1270 246h.01M1273 246h.01M1313 246h.01M1148 247h.01M1154 247h.01M1158 247h.01M1159 247h.01M1160 247h.01M1236 247h.01M1237 247h.01M1248 247h.01M1249 247h.01M1250 247h.01M1264 247h.01M1265 247h.01M1266 247h.01M1268 247h.01M1269 247h.01M1148 248h.01M1149 248h.01M1150 248h.01M1151 248h.01M1152 248h.01M1223 248h.01M1228 248h.01M1229 248h.01M1230 248h.01M1231 248h.01M1235 248h.01M1236 248h.01M1252 248h.01M1255 248h.01M1263 248h.01M1151 249h.01M1154 249h.01M1155 249h.01M1237 249h.01M1244 249h.01M1248 249h.01M1253 249h.01M1257 249h.01M1268 249h.01M1272 249h.01M1304 249h.01M1314 249h.01M555 250h.01M614 250h.01M1156 250h.01M1236 250h.01M1239 250h.01M1254 250h.01M1265 250h.01M1268 250h.01M1271 250h.01M1272 250h.01M1274 250h.01M1149 251h.01M1157 251h.01M1160 251h.01M1172 251h.01M1230 251h.01M1232 251h.01M1233 251h.01M1238 251h.01M1241 251h.01M1259 251h.01M1262 251h.01M1263 251h.01M1270 251h.01M1273 251h.01M1275 251h.01M1281 251h.01M1312 251h.01M944 252h.01M1150 252h.01M1151 252h.01M1156 252h.01M1157 252h.01M1158 252h.01M1159 252h.01M1178 252h.01M1233 252h.01M1234 252h.01M1250 252h.01M1258 252h.01M1274 252h.01M1149 253h.01M1151 253h.01M1152 253h.01M1154 253h.01M1237 253h.01M1244 253h.01M1254 253h.01M1262 253h.01M1267 253h.01M1269 253h.01M579 254h.01M1145 254h.01M1148 254h.01M1150 254h.01M1156 254h.01M1237 254h.01M1248 254h.01M1253 254h.01M1262 254h.01M1264 254h.01M1266 254h.01M1268 254h.01M1270 254h.01M1272 254h.01M1274 254h.01M1279 254h.01M553 255h.01M554 255h.01M1147 255h.01M1148 255h.01M1149 255h.01M1150 255h.01M1229 255h.01M1237 255h.01M1245 255h.01M1246 255h.01M1247 255h.01M1248 255h.01M1259 255h.01M1263 255h.01M1267 255h.01M1317 255h.01M974 256h.01M1146 256h.01M1149 256h.01M1152 256h.01M1211 256h.01M1235 256h.01M1242 256h.01M1249 256h.01M1252 256h.01M1253 256h.01M1254 256h.01M1260 256h.01M1264 256h.01M1267 256h.01M1269 256h.01M1316 256h.01M1146 257h.01M1149 257h.01M1150 257h.01M1151 257h.01M1232 257h.01M1233 257h.01M1235 257h.01M1236 257h.01M1238 257h.01M1244 257h.01M1248 257h.01M1249 257h.01M1253 257h.01M1257 257h.01M1260 257h.01M1267 257h.01M1146 258h.01M1151 258h.01M1153 258h.01M1155 258h.01M1156 258h.01M1157 258h.01M1231 258h.01M1244 258h.01M1247 258h.01M1250 258h.01M1253 258h.01M1258 258h.01M1263 258h.01M1270 258h.01M554 259h.01M1003 259h.01M1151 259h.01M1160 259h.01M1230 259h.01M1236 259h.01M1238 259h.01M1241 259h.01M1249 259h.01M1258 259h.01M1148 260h.01M1150 260h.01M1151 260h.01M1152 260h.01M1155 260h.01M1228 260h.01M1231 260h.01M1235 260h.01M1242 260h.01M1246 260h.01M1258 260h.01M1268 260h.01M1150 261h.01M1154 261h.01M1159 261h.01M1220 261h.01M1243 261h.01M1247 261h.01M1249 261h.01M1252 261h.01M1253 261h.01M1257 261h.01M1260 261h.01M1266 261h.01M562 262h.01M1149 262h.01M1152 262h.01M1155 262h.01M1156 262h.01M1158 262h.01M1221 262h.01M1227 262h.01M1245 262h.01M1247 262h.01M1248 262h.01M1249 262h.01M1250 262h.01M1251 262h.01M1258 262h.01M1271 262h.01M1312 262h.01M550 263h.01M1143 263h.01M1155 263h.01M1236 263h.01M1246 263h.01M1249 263h.01M1257 263h.01M1260 263h.01M1263 263h.01M1264 263h.01M1266 263h.01M1147 264h.01M1149 264h.01M1153 264h.01M1158 264h.01M1235 264h.01M1244 264h.01M1245 264h.01M1247 264h.01M1248 264h.01M1252 264h.01M1253 264h.01M1258 264h.01M1271 264h.01M1155 265h.01M1159 265h.01M1235 265h.01M1236 265h.01M1242 265h.01M1243 265h.01M1249 265h.01M1252 265h.01M1253 265h.01M1255 265h.01M1267 265h.01M1268 265h.01M1142 266h.01M1146 266h.01M1147 266h.01M1149 266h.01M1150 266h.01M1154 266h.01M1156 266h.01M1232 266h.01M1236 266h.01M1238 266h.01M1239 266h.01M1245 266h.01M1248 266h.01M1251 266h.01M1153 267h.01M1156 267h.01M1235 267h.01M1237 267h.01M1238 267h.01M1259 267h.01M1264 267h.01M1275 267h.01M817 268h.01M936 268h.01M1150 268h.01M1157 268h.01M1235 268h.01M1238 268h.01M1239 268h.01M1240 268h.01M1242 268h.01M1243 268h.01M1260 268h.01M1262 268h.01M1274 268h.01M1284 268h.01M1035 269h.01M1148 269h.01M1149 269h.01M1157 269h.01M1232 269h.01M1241 269h.01M1242 269h.01M1249 269h.01M1260 269h.01M559 270h.01M1063 270h.01M1149 270h.01M1150 270h.01M1151 270h.01M1156 270h.01M1214 270h.01M1234 270h.01M1239 270h.01M1247 270h.01M1249 270h.01M1251 270h.01M1252 270h.01M1254 270h.01M1261 270h.01M1110 271h.01M1132 271h.01M1148 271h.01M1156 271h.01M1238 271h.01M1246 271h.01M1248 271h.01M1252 271h.01M1256 271h.01M516 272h.01M1035 272h.01M1145 272h.01M1149 272h.01M1151 272h.01M1155 272h.01M1157 272h.01M1229 272h.01M1235 272h.01M1236 272h.01M1237 272h.01M1241 272h.01M1244 272h.01M1248 272h.01M1251 272h.01M1252 272h.01M1260 272h.01M1042 273h.01M1144 273h.01M1146 273h.01M1147 273h.01M1149 273h.01M1152 273h.01M1160 273h.01M1231 273h.01M1237 273h.01M1238 273h.01M1239 273h.01M1241 273h.01M1246 273h.01M1253 273h.01M1260 273h.01M1261 273h.01M1262 273h.01M1263 273h.01M1265 273h.01M1146 274h.01M1152 274h.01M1241 274h.01M1247 274h.01M1145 275h.01M1147 275h.01M1149 275h.01M1156 275h.01M1159 275h.01M1233 275h.01M1234 275h.01M1241 275h.01M1244 275h.01M1245 275h.01M1251 275h.01M1270 275h.01M987 276h.01M1154 276h.01M1155 276h.01M1156 276h.01M1168 276h.01M1226 276h.01M1235 276h.01M1237 276h.01M1241 276h.01M1245 276h.01M1254 276h.01M1257 276h.01M1260 276h.01M1262 276h.01M952 277h.01M1143 277h.01M1150 277h.01M1155 277h.01M1157 277h.01M1239 277h.01M1246 277h.01M1247 277h.01M1255 277h.01M1259 277h.01M1260 277h.01M1263 277h.01M1147 278h.01M1148 278h.01M1149 278h.01M1154 278h.01M1157 278h.01M1237 278h.01M1238 278h.01M1253 278h.01M1256 278h.01M1260 278h.01M1150 279h.01M1151 279h.01M1154 279h.01M1240 279h.01M1247 279h.01M1251 279h.01M1254 279h.01M1259 279h.01M1268 279h.01M1146 280h.01M1153 280h.01M1161 280h.01M1238 280h.01M1243 280h.01M1245 280h.01M1246 280h.01M1247 280h.01M1249 280h.01M1255 280h.01M1258 280h.01M1260 280h.01M1266 280h.01M1146 281h.01M1147 281h.01M1150 281h.01M1152 281h.01M1154 281h.01M1238 281h.01M1246 281h.01M1250 281h.01M1256 281h.01M1259 281h.01M1261 281h.01M1262 281h.01M1263 281h.01M1146 282h.01M1158 282h.01M1241 282h.01M1244 282h.01M1251 282h.01M1253 282h.01M1257 282h.01M1260 282h.01M762 283h.01M1232 283h.01M1240 283h.01M1241 283h.01M1242 283h.01M1245 283h.01M1247 283h.01M1255 283h.01M1260 283h.01M1261 283h.01M1146 284h.01M1151 284h.01M1155 284h.01M1245 284h.01M1246 284h.01M1147 285h.01M1150 285h.01M1152 285h.01M1154 285h.01M1242 285h.01M1246 285h.01M1247 285h.01M1253 285h.01M1260 285h.01M1146 286h.01M1149 286h.01M1229 286h.01M1259 286h.01M1268 286h.01M1148 287h.01M1149 287h.01M1238 287h.01M1246 287h.01M1249 287h.01M1251 287h.01M1262 287h.01M667 288h.01M1109 288h.01M1144 288h.01M1148 288h.01M1152 288h.01M1153 288h.01M1223 288h.01M1243 288h.01M1244 288h.01M1253 288h.01M1260 288h.01M967 289h.01M1153 289h.01M1157 289h.01M1236 289h.01M1239 289h.01M1241 289h.01M1245 289h.01M1250 289h.01M1251 289h.01M1252 289h.01M1255 289h.01M1260 289h.01M1143 290h.01M1148 290h.01M1149 290h.01M1151 290h.01M1156 290h.01M1237 290h.01M1241 290h.01M1243 290h.01M1248 290h.01M1249 290h.01M1254 290h.01M1255 290h.01M1149 291h.01M1239 291h.01M1240 291h.01M1243 291h.01M1251 291h.01M1255 291h.01M1149 292h.01M1248 292h.01M1252 292h.01M1254 292h.01M1258 292h.01M1260 292h.01M1265 292h.01M1238 293h.01M1241 293h.01M1242 293h.01M1243 293h.01M1256 293h.01M1257 293h.01M1154 294h.01M1233 294h.01M1238 294h.01M1241 294h.01M1242 294h.01M1252 294h.01M1254 294h.01M1256 294h.01M1257 294h.01M1021 295h.01M1145 295h.01M1153 295h.01M1241 295h.01M1243 295h.01M1245 295h.01M1246 295h.01M1252 295h.01M1253 295h.01M1254 295h.01M1258 295h.01M1146 296h.01M1149 296h.01M1151 296h.01M1242 296h.01M1246 296h.01M1257 296h.01M1259 296h.01M1150 297h.01M1244 297h.01M1248 297h.01M1249 297h.01M1257 297h.01M1258 297h.01M1259 297h.01M1153 298h.01M1242 298h.01M1246 298h.01M1250 298h.01M1269 298h.01M1239 299h.01M1240 299h.01M1241 299h.01M1244 299h.01M1248 299h.01M1252 299h.01M1253 299h.01M1260 299h.01M1261 299h.01M1240 300h.01M1251 300h.01M1257 300h.01M1258 300h.01M1259 300h.01M1155 301h.01M1244 301h.01M1245 301h.01M1247 301h.01M1259 301h.01M1239 302h.01M1240 302h.01M1251 302h.01M1252 302h.01M1256 302h.01M1258 302h.01M1150 303h.01M1239 303h.01M1251 303h.01M1255 303h.01M1260 303h.01M600 304h.01M1244 304h.01M1253 304h.01M1148 305h.01M1149 305h.01M1238 305h.01M1244 305h.01M1249 305h.01M1254 305h.01M1149 306h.01M1256 306h.01M1259 306h.01M1239 307h.01M1240 307h.01M1246 307h.01M1248 307h.01M288 308h.01M1241 308h.01M1243 308h.01M1257 308h.01M1237 309h.01M1240 309h.01M1244 309h.01M1251 309h.01M1258 309h.01M1254 310h.01M1257 310h.01M950 311h.01M1241 311h.01M1150 312h.01M1243 312h.01M1252 312h.01M1253 312h.01M1243 313h.01M1251 313h.01M1177 314h.01M1252 314h.01M1254 315h.01M981 316h.01M1240 316h.01M1245 316h.01M992 317h.01M1182 317h.01M1243 317h.01M1256 317h.01M1245 318h.01M1250 318h.01M1251 318h.01M1256 318h.01M1253 319h.01M1231 320h.01M1194 323h.01M1280 324h.01M1239 325h.01M1256 325h.01M1242 326h.01M1254 326h.01M1242 327h.01M697 333h.01M1235 339h.01M1227 345h.01M594 348h.01M592 388h.01" stroke="#fff" stroke-opacity="0.1" stroke-width="1.25" stroke-linecap="round" fill="none"/><path d="M355 85h.01M1196 88h.01M1252 89h.01M553 92h.01M1178 92h.01M424 93h.01M1001 95h.01M990 96h.01M1095 96h.01M1245 97h.01M607 99h.01M1254 100h.01M663 101h.01M1053 101h.01M1286 102h.01M1226 104h.01M895 106h.01M1019 106h.01M1241 106h.01M1288 108h.01M1011 109h.01M1098 109h.01M1224 109h.01M1246 109h.01M1262 110h.01M972 111h.01M1266 111h.01M1257 113h.01M1262 113h.01M739 114h.01M1262 114h.01M550 115h.01M896 115h.01M1247 115h.01M932 116h.01M1088 116h.01M1264 116h.01M1281 116h.01M1245 117h.01M975 118h.01M1262 118h.01M677 119h.01M1082 119h.01M1260 119h.01M1244 120h.01M1246 120h.01M1156 121h.01M1244 121h.01M1262 121h.01M1285 121h.01M1242 122h.01M1245 122h.01M1246 123h.01M1121 124h.01M1162 125h.01M1158 126h.01M1245 126h.01M1257 126h.01M1261 126h.01M999 127h.01M1260 127h.01M1244 128h.01M1259 128h.01M1159 129h.01M1259 129h.01M1260 129h.01M1255 130h.01M1263 130h.01M1066 131h.01M1264 131h.01M1245 132h.01M953 133h.01M1160 133h.01M1182 133h.01M1242 133h.01M1244 133h.01M1245 133h.01M1161 134h.01M1258 134h.01M1263 134h.01M1243 135h.01M1244 135h.01M960 136h.01M1159 136h.01M1163 136h.01M1188 136h.01M1242 136h.01M1244 136h.01M1159 137h.01M1160 137h.01M1249 137h.01M1159 138h.01M1160 138h.01M1250 138h.01M1257 138h.01M1259 138h.01M1260 138h.01M1264 138h.01M1023 139h.01M1182 139h.01M1208 139h.01M1241 139h.01M1245 139h.01M1260 139h.01M1261 139h.01M1264 139h.01M491 140h.01M1008 140h.01M1026 140h.01M617 141h.01M1117 141h.01M1155 141h.01M1247 141h.01M1257 141h.01M1259 141h.01M1266 141h.01M993 142h.01M1161 142h.01M1260 142h.01M1096 143h.01M1155 143h.01M1245 143h.01M1255 143h.01M1256 143h.01M1258 143h.01M1280 143h.01M1128 144h.01M1157 144h.01M1247 144h.01M1277 144h.01M1155 145h.01M1156 145h.01M1160 145h.01M1242 145h.01M1249 145h.01M1257 145h.01M1262 145h.01M1263 145h.01M1204 146h.01M1249 146h.01M1263 146h.01M1141 147h.01M1152 147h.01M1156 147h.01M1244 147h.01M1247 147h.01M1254 147h.01M1255 147h.01M1256 147h.01M1257 147h.01M1263 147h.01M1110 148h.01M1159 148h.01M1243 148h.01M1257 148h.01M1258 148h.01M1260 148h.01M1262 148h.01M1264 148h.01M1287 148h.01M1151 149h.01M1158 149h.01M1244 149h.01M1263 149h.01M1156 150h.01M1160 150h.01M1237 150h.01M1257 150h.01M543 151h.01M549 151h.01M1240 151h.01M1261 151h.01M1265 151h.01M1267 151h.01M1157 152h.01M1242 152h.01M1243 152h.01M1272 152h.01M1296 152h.01M1157 153h.01M1241 153h.01M1242 153h.01M1251 153h.01M1260 153h.01M1298 153h.01M1156 154h.01M1159 154h.01M1162 154h.01M1164 154h.01M1245 154h.01M1152 155h.01M1162 155h.01M1163 155h.01M1240 155h.01M1242 155h.01M1246 155h.01M1249 155h.01M1259 155h.01M1153 156h.01M1155 156h.01M1157 156h.01M1158 156h.01M1242 156h.01M1244 156h.01M1247 156h.01M1154 157h.01M1247 157h.01M1248 157h.01M1010 158h.01M1154 158h.01M1245 158h.01M1251 158h.01M1257 158h.01M1267 158h.01M1046 159h.01M1151 159h.01M1155 159h.01M1163 159h.01M1209 159h.01M1244 159h.01M1250 159h.01M1256 159h.01M1266 159h.01M1068 160h.01M1158 160h.01M1159 160h.01M1162 160h.01M1231 160h.01M1232 160h.01M1245 160h.01M1256 160h.01M1261 160h.01M1051 161h.01M1155 161h.01M1160 161h.01M1162 161h.01M1241 161h.01M1243 161h.01M1249 161h.01M1255 161h.01M1260 161h.01M1285 161h.01M1158 162h.01M1246 162h.01M1257 162h.01M1263 162h.01M1303 162h.01M1149 163h.01M1154 163h.01M1242 163h.01M1246 163h.01M1261 163h.01M1262 163h.01M1242 164h.01M1243 164h.01M1246 164h.01M1256 164h.01M1265 164h.01M1150 165h.01M1241 165h.01M1247 165h.01M1249 165h.01M1257 165h.01M1241 166h.01M1245 166h.01M1246 166h.01M1250 166h.01M1263 166h.01M1274 166h.01M704 167h.01M1153 167h.01M1249 167h.01M1251 167h.01M1257 167h.01M1266 167h.01M1118 168h.01M1156 168h.01M1239 168h.01M1249 168h.01M1256 168h.01M1265 168h.01M1276 168h.01M1160 169h.01M1161 169h.01M1249 169h.01M1251 169h.01M1258 169h.01M1259 169h.01M1260 169h.01M1266 169h.01M1269 169h.01M1279 169h.01M641 170h.01M1153 170h.01M1197 170h.01M1236 170h.01M1240 170h.01M1248 170h.01M1250 170h.01M1263 170h.01M1018 171h.01M1153 171h.01M1162 171h.01M1255 171h.01M941 172h.01M1151 172h.01M1154 172h.01M1241 172h.01M1249 172h.01M1252 172h.01M1266 172h.01M877 173h.01M1237 173h.01M1240 173h.01M1247 173h.01M1259 173h.01M1289 173h.01M1153 174h.01M1155 174h.01M1160 174h.01M1248 174h.01M1249 174h.01M1252 174h.01M1257 174h.01M1260 174h.01M960 175h.01M1131 175h.01M1160 175h.01M1161 175h.01M1254 175h.01M1266 175h.01M1267 175h.01M1274 175h.01M732 176h.01M1160 176h.01M1238 176h.01M1248 176h.01M1256 176h.01M1262 176h.01M1153 177h.01M1155 177h.01M1159 177h.01M1161 177h.01M1251 177h.01M1252 177h.01M1254 177h.01M1255 177h.01M1259 177h.01M1262 177h.01M1275 177h.01M981 178h.01M1160 178h.01M1238 178h.01M1239 178h.01M799 179h.01M924 179h.01M1054 179h.01M1153 179h.01M1155 179h.01M1156 179h.01M1160 179h.01M1235 179h.01M1247 179h.01M1249 179h.01M1250 179h.01M1258 179h.01M1153 180h.01M1157 180h.01M1230 180h.01M1235 180h.01M1244 180h.01M1249 180h.01M1279 180h.01M1157 181h.01M1159 181h.01M1164 181h.01M1237 181h.01M1253 181h.01M1265 181h.01M1151 182h.01M1153 182h.01M1155 182h.01M1158 182h.01M1160 182h.01M1239 182h.01M1241 182h.01M1242 182h.01M1249 182h.01M1251 182h.01M1259 182h.01M1265 182h.01M1267 182h.01M1270 182h.01M695 183h.01M714 183h.01M957 183h.01M1153 183h.01M1161 183h.01M1236 183h.01M1239 183h.01M1240 183h.01M1244 183h.01M1250 183h.01M1262 183h.01M1264 183h.01M1265 183h.01M1267 183h.01M1276 183h.01M1230 184h.01M1239 184h.01M1248 184h.01M1263 184h.01M1151 185h.01M1155 185h.01M1158 185h.01M1159 185h.01M1229 185h.01M1230 185h.01M1250 185h.01M1252 185h.01M1236 186h.01M1239 186h.01M1255 186h.01M1261 186h.01M1269 186h.01M1160 187h.01M1244 187h.01M1248 187h.01M1252 187h.01M1266 187h.01M1147 188h.01M1151 188h.01M1162 188h.01M1254 188h.01M1255 188h.01M1257 188h.01M1274 188h.01M1314 188h.01M1231 189h.01M1235 189h.01M1248 189h.01M1263 189h.01M1152 190h.01M1157 190h.01M1233 190h.01M1246 190h.01M1248 190h.01M1254 190h.01M1263 190h.01M1270 190h.01M1279 190h.01M1000 191h.01M1156 191h.01M1232 191h.01M1248 191h.01M1250 191h.01M1255 191h.01M1262 191h.01M1282 191h.01M1159 192h.01M1161 192h.01M1245 192h.01M1246 192h.01M1247 192h.01M1250 192h.01M1252 192h.01M1254 192h.01M1264 192h.01M1266 192h.01M1267 192h.01M1007 193h.01M1149 193h.01M1156 193h.01M1160 193h.01M1235 193h.01M1255 193h.01M1263 193h.01M1282 193h.01M961 194h.01M986 194h.01M1091 194h.01M1153 194h.01M1154 194h.01M1155 194h.01M1157 194h.01M1159 194h.01M1233 194h.01M1234 194h.01M1242 194h.01M1245 194h.01M1252 194h.01M1269 194h.01M1155 195h.01M1225 195h.01M1227 195h.01M1235 195h.01M1243 195h.01M1246 195h.01M1250 195h.01M1252 195h.01M1256 195h.01M1259 195h.01M1262 195h.01M1266 195h.01M1276 195h.01M970 196h.01M1155 196h.01M1159 196h.01M1237 196h.01M1248 196h.01M1257 196h.01M1262 196h.01M1263 196h.01M1265 196h.01M1155 197h.01M1230 197h.01M1236 197h.01M1238 197h.01M1247 197h.01M1250 197h.01M1251 197h.01M1269 197h.01M1061 198h.01M1153 198h.01M1198 198h.01M1232 198h.01M1235 198h.01M1239 198h.01M1240 198h.01M1252 198h.01M1254 198h.01M1255 198h.01M1266 198h.01M1271 198h.01M956 199h.01M1137 199h.01M1159 199h.01M1191 199h.01M1226 199h.01M1247 199h.01M1249 199h.01M1257 199h.01M1265 199h.01M1268 199h.01M1269 199h.01M1270 199h.01M1276 199h.01M1278 199h.01M1145 200h.01M1146 200h.01M1148 200h.01M1149 200h.01M1152 200h.01M1157 200h.01M1219 200h.01M1230 200h.01M1235 200h.01M1240 200h.01M1242 200h.01M1263 200h.01M1277 200h.01M1282 200h.01M266 201h.01M1096 201h.01M1148 201h.01M1149 201h.01M1160 201h.01M1231 201h.01M1237 201h.01M1246 201h.01M1248 201h.01M1249 201h.01M1263 201h.01M1264 201h.01M1291 201h.01M780 202h.01M1157 202h.01M1223 202h.01M1232 202h.01M1233 202h.01M1237 202h.01M1240 202h.01M1250 202h.01M1261 202h.01M1088 203h.01M1155 203h.01M1230 203h.01M1233 203h.01M1234 203h.01M1236 203h.01M1260 203h.01M1271 203h.01M1272 203h.01M1102 204h.01M1154 204h.01M1161 204h.01M1235 204h.01M1236 204h.01M1250 204h.01M1257 204h.01M1267 204h.01M1270 204h.01M1285 204h.01M1156 205h.01M1226 205h.01M1237 205h.01M1245 205h.01M1248 205h.01M1262 205h.01M1271 205h.01M1057 206h.01M1144 206h.01M1153 206h.01M1216 206h.01M1231 206h.01M1243 206h.01M1248 206h.01M1269 206h.01M1159 207h.01M1233 207h.01M1243 207h.01M1264 207h.01M1269 207h.01M1276 207h.01M1231 208h.01M1232 208h.01M1240 208h.01M1264 208h.01M1267 208h.01M1268 208h.01M1274 208h.01M1275 208h.01M1279 208h.01M639 209h.01M673 209h.01M1157 209h.01M1212 209h.01M1234 209h.01M1238 209h.01M1240 209h.01M1257 209h.01M1258 209h.01M1262 209h.01M1269 209h.01M1276 209h.01M982 210h.01M1158 210h.01M1159 210h.01M1161 210h.01M1232 210h.01M1237 210h.01M1239 210h.01M1245 210h.01M1253 210h.01M1260 210h.01M1268 210h.01M1157 211h.01M1234 211h.01M1250 211h.01M1270 211h.01M1273 211h.01M1275 211h.01M1151 212h.01M1160 212h.01M1221 212h.01M1232 212h.01M1249 212h.01M1263 212h.01M1266 212h.01M1271 212h.01M1272 212h.01M1279 212h.01M1318 212h.01M1231 213h.01M1254 213h.01M1282 213h.01M881 214h.01M1152 214h.01M1158 214h.01M1218 214h.01M1226 214h.01M1231 214h.01M1240 214h.01M1251 214h.01M1261 214h.01M1284 214h.01M1160 215h.01M1162 215h.01M1228 215h.01M1233 215h.01M1242 215h.01M1245 215h.01M1246 215h.01M1259 215h.01M1260 215h.01M1265 215h.01M1272 215h.01M1273 215h.01M475 216h.01M633 216h.01M1148 216h.01M1154 216h.01M1156 216h.01M1158 216h.01M1161 216h.01M1197 216h.01M1227 216h.01M1259 216h.01M1264 216h.01M1267 216h.01M1277 216h.01M1280 216h.01M1318 216h.01M1014 217h.01M1148 217h.01M1150 217h.01M1151 217h.01M1160 217h.01M1165 217h.01M1224 217h.01M1230 217h.01M1233 217h.01M1235 217h.01M1236 217h.01M1248 217h.01M1261 217h.01M1273 217h.01M1278 217h.01M1283 217h.01M650 218h.01M1156 218h.01M1160 218h.01M1225 218h.01M1226 218h.01M1231 218h.01M1234 218h.01M1240 218h.01M1250 218h.01M1252 218h.01M1265 218h.01M1273 218h.01M1277 218h.01M1278 218h.01M995 219h.01M1154 219h.01M1216 219h.01M1247 219h.01M1250 219h.01M1271 219h.01M1277 219h.01M1311 219h.01M1318 219h.01M1127 220h.01M1161 220h.01M1229 220h.01M1232 220h.01M1236 220h.01M1267 220h.01M1270 220h.01M1098 221h.01M1151 221h.01M1154 221h.01M1241 221h.01M1266 221h.01M1268 221h.01M238 222h.01M1156 222h.01M1242 222h.01M1260 222h.01M1269 222h.01M1270 222h.01M1275 222h.01M1100 223h.01M1151 223h.01M1155 223h.01M1156 223h.01M1157 223h.01M1231 223h.01M1234 223h.01M1236 223h.01M1240 223h.01M1241 223h.01M1250 223h.01M1251 223h.01M1263 223h.01M1284 223h.01M1305 223h.01M1131 224h.01M1206 224h.01M1229 224h.01M1238 224h.01M1263 224h.01M1265 224h.01M1269 224h.01M1270 224h.01M1153 225h.01M1156 225h.01M1160 225h.01M1247 225h.01M1270 225h.01M1273 225h.01M610 226h.01M1148 226h.01M1157 226h.01M1161 226h.01M1162 226h.01M1231 226h.01M1264 226h.01M1267 226h.01M1275 226h.01M1287 226h.01M1146 227h.01M1153 227h.01M1155 227h.01M1218 227h.01M1233 227h.01M1234 227h.01M1238 227h.01M1250 227h.01M1268 227h.01M1281 227h.01M1148 228h.01M1155 228h.01M1219 228h.01M1224 228h.01M1235 228h.01M1239 228h.01M1240 228h.01M1246 228h.01M1249 228h.01M1253 228h.01M1267 228h.01M936 229h.01M1087 229h.01M1149 229h.01M1152 229h.01M1158 229h.01M1159 229h.01M1205 229h.01M1263 229h.01M1266 229h.01M1273 229h.01M953 230h.01M993 230h.01M1152 230h.01M1154 230h.01M1155 230h.01M1160 230h.01M1235 230h.01M1237 230h.01M1247 230h.01M1273 230h.01M464 231h.01M1221 231h.01M1230 231h.01M1232 231h.01M1242 231h.01M1247 231h.01M1252 231h.01M1259 231h.01M1272 231h.01M1274 231h.01M940 232h.01M1153 232h.01M1156 232h.01M1158 232h.01M1159 232h.01M1239 232h.01M1246 232h.01M461 233h.01M1147 233h.01M1151 233h.01M1153 233h.01M1154 233h.01M1159 233h.01M1224 233h.01M1242 233h.01M1250 233h.01M1252 233h.01M1264 233h.01M1070 234h.01M1094 234h.01M1160 234h.01M1162 234h.01M1230 234h.01M1235 234h.01M1238 234h.01M1250 234h.01M1258 234h.01M1263 234h.01M1264 234h.01M1266 234h.01M1270 234h.01M1274 234h.01M1150 235h.01M1152 235h.01M1236 235h.01M1237 235h.01M1239 235h.01M1241 235h.01M1246 235h.01M1250 235h.01M1261 235h.01M1273 235h.01M1278 235h.01M1147 236h.01M1148 236h.01M1159 236h.01M1254 236h.01M1256 236h.01M1264 236h.01M1265 236h.01M1316 236h.01M1146 237h.01M1152 237h.01M1159 237h.01M1235 237h.01M1248 237h.01M1252 237h.01M1262 237h.01M1263 237h.01M1264 237h.01M1265 237h.01M1294 237h.01M1149 238h.01M1154 238h.01M1226 238h.01M1243 238h.01M1253 238h.01M1260 238h.01M1264 238h.01M1265 238h.01M1267 238h.01M1271 238h.01M1272 238h.01M1155 239h.01M1156 239h.01M1229 239h.01M1232 239h.01M1234 239h.01M1236 239h.01M1246 239h.01M1255 239h.01M1309 239h.01M944 240h.01M1235 240h.01M1246 240h.01M1247 240h.01M1249 240h.01M1255 240h.01M1264 240h.01M1266 240h.01M1268 240h.01M1272 240h.01M969 241h.01M1153 241h.01M1237 241h.01M1238 241h.01M1245 241h.01M1248 241h.01M1250 241h.01M1271 241h.01M1302 241h.01M658 242h.01M1025 242h.01M1119 242h.01M1149 242h.01M1151 242h.01M1237 242h.01M1247 242h.01M1249 242h.01M1251 242h.01M1253 242h.01M1258 242h.01M1261 242h.01M1266 242h.01M1276 242h.01M1318 242h.01M1064 243h.01M1109 243h.01M1130 243h.01M1149 243h.01M1156 243h.01M1237 243h.01M1238 243h.01M1239 243h.01M1246 243h.01M1247 243h.01M1254 243h.01M1257 243h.01M1259 243h.01M1263 243h.01M1267 243h.01M980 244h.01M1147 244h.01M1149 244h.01M1151 244h.01M1152 244h.01M1244 244h.01M1247 244h.01M1248 244h.01M1264 244h.01M1282 244h.01M1150 245h.01M1158 245h.01M1191 245h.01M1253 245h.01M1265 245h.01M1099 246h.01M1148 246h.01M1151 246h.01M1158 246h.01M1250 246h.01M1262 246h.01M1264 246h.01M1299 246h.01M1003 247h.01M1156 247h.01M1157 247h.01M1240 247h.01M1241 247h.01M1255 247h.01M1258 247h.01M1262 247h.01M1157 248h.01M1238 248h.01M1241 248h.01M1249 248h.01M1260 248h.01M1261 248h.01M956 249h.01M1153 249h.01M1158 249h.01M1218 249h.01M1241 249h.01M1251 249h.01M1260 249h.01M1265 249h.01M1266 249h.01M1267 249h.01M1153 250h.01M1155 250h.01M1237 250h.01M1238 250h.01M1243 250h.01M1244 250h.01M1246 250h.01M1250 250h.01M1257 250h.01M1258 250h.01M1260 250h.01M1262 250h.01M1270 250h.01M1314 250h.01M1148 251h.01M1151 251h.01M1153 251h.01M1154 251h.01M1246 251h.01M1247 251h.01M1250 251h.01M981 252h.01M1149 252h.01M1239 252h.01M1240 252h.01M1244 252h.01M1249 252h.01M1255 252h.01M1257 252h.01M1259 252h.01M1260 252h.01M1261 252h.01M1266 252h.01M1238 253h.01M1239 253h.01M1242 253h.01M1245 253h.01M1252 253h.01M1253 253h.01M1261 253h.01M748 254h.01M1154 254h.01M1160 254h.01M1240 254h.01M1241 254h.01M1242 254h.01M1257 254h.01M1260 254h.01M1292 254h.01M566 255h.01M884 255h.01M1160 255h.01M1233 255h.01M1243 255h.01M1252 255h.01M1253 255h.01M1094 256h.01M1148 256h.01M1155 256h.01M1237 256h.01M1239 256h.01M1244 256h.01M1251 256h.01M1259 256h.01M1262 256h.01M1263 256h.01M1296 256h.01M829 257h.01M1048 257h.01M1079 257h.01M1152 257h.01M1155 257h.01M1159 257h.01M1239 257h.01M1243 257h.01M1246 257h.01M1250 257h.01M1255 257h.01M1261 257h.01M1236 258h.01M1241 258h.01M1252 258h.01M1255 258h.01M1261 258h.01M1265 258h.01M732 259h.01M1146 259h.01M1148 259h.01M1155 259h.01M1234 259h.01M1237 259h.01M1246 259h.01M1248 259h.01M1252 259h.01M1269 259h.01M1252 260h.01M1254 260h.01M1259 260h.01M1153 261h.01M1239 261h.01M1240 261h.01M1241 261h.01M1245 261h.01M1250 261h.01M1259 261h.01M568 262h.01M849 262h.01M1203 262h.01M1239 262h.01M1243 262h.01M1244 262h.01M1254 262h.01M1257 262h.01M1259 262h.01M1067 263h.01M1149 263h.01M1154 263h.01M1245 263h.01M1250 263h.01M1251 263h.01M1278 263h.01M1155 264h.01M1238 264h.01M1243 264h.01M1250 264h.01M1149 265h.01M1151 265h.01M1153 265h.01M1238 265h.01M1248 265h.01M1259 265h.01M1194 266h.01M1241 266h.01M1243 266h.01M1253 266h.01M1270 266h.01M939 267h.01M1150 267h.01M1151 267h.01M1241 267h.01M1243 267h.01M1244 267h.01M1254 267h.01M1256 267h.01M712 268h.01M1146 268h.01M1151 268h.01M1193 268h.01M1207 268h.01M1245 268h.01M1248 268h.01M1258 268h.01M1266 268h.01M1152 269h.01M1239 269h.01M1243 269h.01M1244 269h.01M1247 269h.01M676 270h.01M1240 270h.01M1241 270h.01M1243 270h.01M1253 270h.01M1262 270h.01M1147 271h.01M1221 271h.01M1228 271h.01M1250 271h.01M1306 271h.01M719 272h.01M1240 272h.01M1247 272h.01M1258 272h.01M1315 272h.01M302 273h.01M1155 273h.01M1235 273h.01M1252 273h.01M1255 274h.01M1259 274h.01M1260 274h.01M1239 275h.01M1243 275h.01M1256 275h.01M978 276h.01M1149 276h.01M1246 276h.01M1247 276h.01M1253 276h.01M1152 277h.01M1241 277h.01M1245 277h.01M1253 277h.01M1256 277h.01M1258 277h.01M1240 278h.01M1245 278h.01M1252 278h.01M1258 278h.01M1155 279h.01M1256 279h.01M1258 279h.01M1260 279h.01M1263 279h.01M1309 279h.01M1140 280h.01M1179 280h.01M1240 280h.01M1242 280h.01M1255 281h.01M1258 281h.01M967 282h.01M1152 282h.01M1243 282h.01M1250 282h.01M1254 282h.01M1255 282h.01M1259 282h.01M1261 282h.01M901 283h.01M1093 283h.01M1243 283h.01M1252 283h.01M1256 283h.01M698 284h.01M1149 284h.01M1241 284h.01M1243 284h.01M1257 284h.01M1259 284h.01M1262 284h.01M681 285h.01M1249 285h.01M1250 285h.01M1252 285h.01M894 286h.01M1235 286h.01M1239 286h.01M1240 286h.01M1253 286h.01M1248 287h.01M1258 287h.01M1150 288h.01M1242 288h.01M1247 288h.01M1255 288h.01M1256 288h.01M1254 289h.01M1257 289h.01M1258 289h.01M1055 290h.01M1240 290h.01M1246 290h.01M1164 291h.01M1241 291h.01M1254 291h.01M1256 291h.01M1259 291h.01M1153 292h.01M1239 292h.01M1240 292h.01M1255 292h.01M1259 292h.01M1253 293h.01M1244 295h.01M1259 295h.01M784 296h.01M1068 296h.01M1244 296h.01M1247 296h.01M1252 296h.01M1055 297h.01M1243 297h.01M643 298h.01M1241 298h.01M1258 298h.01M909 299h.01M1258 299h.01M1254 300h.01M1241 301h.01M1253 301h.01M1242 302h.01M1240 303h.01M1242 303h.01M1244 303h.01M1257 303h.01M1153 304h.01M1255 304h.01M1282 304h.01M1205 305h.01M1241 305h.01M1243 305h.01M1255 305h.01M1256 305h.01M1257 305h.01M1241 307h.01M1255 307h.01M1019 308h.01M1228 309h.01M1256 309h.01M1308 309h.01M1220 310h.01M1202 311h.01M1242 311h.01M1253 311h.01M1254 311h.01M1063 312h.01M1256 312h.01M1257 312h.01M1258 312h.01M1105 313h.01M1244 313h.01M956 314h.01M1255 314h.01M1288 314h.01M1242 315h.01M1254 316h.01M1165 318h.01M911 319h.01M1017 327h.01M1289 327h.01M931 329h.01M1134 329h.01M1272 337h.01M1207 354h.01M533 370h.01" stroke="#fff" stroke-opacity="0.17" stroke-width="1.25" stroke-linecap="round" fill="none"/><path d="M1051 86h.01M1151 91h.01M773 95h.01M1134 98h.01M977 99h.01M1293 99h.01M546 101h.01M1144 102h.01M1281 102h.01M1306 102h.01M1023 103h.01M1258 103h.01M855 106h.01M1114 106h.01M776 107h.01M966 107h.01M1245 110h.01M1175 111h.01M1246 111h.01M1047 112h.01M1292 114h.01M1078 115h.01M1185 117h.01M1202 117h.01M1246 117h.01M246 118h.01M1244 119h.01M1262 119h.01M1021 120h.01M1111 120h.01M1176 120h.01M1292 120h.01M1248 123h.01M1259 123h.01M1245 124h.01M1260 124h.01M1203 125h.01M947 127h.01M1195 127h.01M315 128h.01M1258 128h.01M1246 129h.01M1247 129h.01M1244 130h.01M1147 131h.01M913 132h.01M1051 132h.01M1159 132h.01M1195 132h.01M1201 132h.01M1246 132h.01M1262 132h.01M1257 133h.01M1261 133h.01M1125 136h.01M1259 136h.01M1009 137h.01M1243 137h.01M1247 137h.01M1096 138h.01M1263 138h.01M558 139h.01M1051 139h.01M1242 139h.01M1259 139h.01M1245 140h.01M1283 140h.01M733 141h.01M1059 141h.01M1160 141h.01M1243 141h.01M1258 141h.01M1261 141h.01M1159 142h.01M1057 143h.01M1159 143h.01M1260 143h.01M1160 144h.01M1257 144h.01M529 145h.01M998 146h.01M1152 146h.01M1153 146h.01M1256 146h.01M1257 146h.01M1193 147h.01M1243 147h.01M1246 147h.01M1261 147h.01M1262 147h.01M1264 147h.01M1032 148h.01M1081 148h.01M1247 148h.01M1263 148h.01M1304 148h.01M1242 149h.01M1248 150h.01M1263 150h.01M1160 151h.01M1232 151h.01M1260 151h.01M1263 151h.01M1244 152h.01M1261 152h.01M1244 153h.01M1246 153h.01M1255 153h.01M1262 153h.01M1246 154h.01M1258 154h.01M1259 154h.01M1260 154h.01M1158 155h.01M1243 155h.01M1260 155h.01M1081 156h.01M1133 156h.01M1243 156h.01M1255 156h.01M1262 156h.01M1242 157h.01M1243 157h.01M1245 157h.01M1262 157h.01M1159 158h.01M1243 158h.01M1244 158h.01M1258 158h.01M1263 158h.01M1158 159h.01M1242 159h.01M1248 159h.01M1259 159h.01M1263 159h.01M358 160h.01M900 160h.01M1247 160h.01M1259 160h.01M1154 161h.01M1159 161h.01M1242 161h.01M1259 161h.01M947 162h.01M1156 162h.01M1183 162h.01M1241 162h.01M1242 162h.01M1264 162h.01M1267 162h.01M1117 163h.01M1243 163h.01M1256 163h.01M1257 163h.01M1258 163h.01M927 164h.01M1007 164h.01M1153 164h.01M1255 164h.01M1260 164h.01M1270 164h.01M948 165h.01M1154 165h.01M1240 165h.01M1243 165h.01M1246 165h.01M1256 165h.01M1258 165h.01M1265 165h.01M1159 166h.01M1259 166h.01M1261 166h.01M902 167h.01M1143 167h.01M1158 167h.01M1240 167h.01M1248 167h.01M1255 167h.01M1259 167h.01M1264 167h.01M720 168h.01M1109 168h.01M1117 168h.01M1242 168h.01M1261 168h.01M1264 168h.01M493 169h.01M1008 169h.01M1202 169h.01M1242 169h.01M1244 169h.01M1262 169h.01M1242 170h.01M1244 170h.01M1247 170h.01M1253 170h.01M1258 170h.01M1266 170h.01M1237 171h.01M1241 171h.01M1246 171h.01M1248 171h.01M1268 171h.01M1243 172h.01M1258 172h.01M1154 173h.01M1160 173h.01M1244 173h.01M1249 173h.01M1261 173h.01M1262 173h.01M1265 173h.01M1158 174h.01M1214 174h.01M1242 174h.01M1262 174h.01M1265 174h.01M1244 175h.01M1252 175h.01M1262 175h.01M1157 176h.01M1240 176h.01M1251 176h.01M1255 176h.01M1258 176h.01M1264 176h.01M1271 176h.01M567 177h.01M1151 177h.01M1156 177h.01M1245 177h.01M1248 177h.01M1256 177h.01M1257 177h.01M669 178h.01M1154 178h.01M1241 178h.01M1244 178h.01M1259 178h.01M1262 178h.01M886 179h.01M1154 179h.01M1158 179h.01M1237 179h.01M1254 179h.01M1257 179h.01M1241 180h.01M1260 180h.01M1160 181h.01M1212 181h.01M1243 181h.01M1250 181h.01M1254 181h.01M1260 181h.01M1264 181h.01M1274 181h.01M990 182h.01M1238 182h.01M1240 182h.01M1255 182h.01M1261 182h.01M1264 182h.01M1151 183h.01M1154 183h.01M1241 183h.01M1247 183h.01M1259 183h.01M946 184h.01M1153 184h.01M1156 184h.01M1233 184h.01M1243 184h.01M1258 184h.01M1270 184h.01M556 185h.01M1097 185h.01M1142 185h.01M1157 185h.01M1240 185h.01M1247 185h.01M1261 185h.01M1263 185h.01M1264 185h.01M1241 186h.01M1244 186h.01M1246 186h.01M1250 186h.01M1253 186h.01M1254 186h.01M1259 186h.01M1087 187h.01M1154 187h.01M1158 187h.01M1235 187h.01M1236 187h.01M1240 187h.01M1259 187h.01M1262 187h.01M1264 187h.01M1156 188h.01M1240 188h.01M1241 188h.01M1250 188h.01M1252 188h.01M1256 188h.01M1160 189h.01M1238 189h.01M1239 189h.01M1240 189h.01M1244 189h.01M1253 189h.01M1256 189h.01M1265 189h.01M1158 190h.01M1160 190h.01M1238 190h.01M1252 190h.01M1253 190h.01M1262 190h.01M758 191h.01M1047 191h.01M1090 191h.01M1160 191h.01M1162 191h.01M1237 191h.01M1241 191h.01M1249 191h.01M1251 191h.01M1254 191h.01M1261 191h.01M1276 191h.01M1152 192h.01M1153 192h.01M1155 192h.01M1160 192h.01M1235 192h.01M1238 192h.01M1251 192h.01M1261 192h.01M1265 192h.01M1317 192h.01M1238 193h.01M1243 193h.01M1248 193h.01M1251 193h.01M1253 193h.01M1254 193h.01M1264 193h.01M1265 193h.01M1267 193h.01M1156 194h.01M1161 194h.01M1195 194h.01M1240 194h.01M1241 194h.01M1250 194h.01M1253 194h.01M1258 194h.01M1262 194h.01M1264 194h.01M1157 195h.01M1176 195h.01M1244 195h.01M1245 195h.01M1249 195h.01M1254 195h.01M1263 195h.01M1267 195h.01M1158 196h.01M1235 196h.01M1246 196h.01M1251 196h.01M1252 196h.01M1256 196h.01M1235 197h.01M1239 197h.01M1242 197h.01M1252 197h.01M1253 197h.01M1260 197h.01M1265 197h.01M1311 197h.01M1157 198h.01M1158 198h.01M1190 198h.01M1201 198h.01M1212 198h.01M1237 198h.01M1259 198h.01M1151 199h.01M1222 199h.01M1240 199h.01M1242 199h.01M1254 199h.01M1255 199h.01M1262 199h.01M1273 199h.01M1274 199h.01M1155 200h.01M1249 200h.01M1260 200h.01M1267 200h.01M1273 200h.01M1290 200h.01M1055 201h.01M1154 201h.01M1236 201h.01M1241 201h.01M1251 201h.01M1252 201h.01M1254 201h.01M1259 201h.01M1261 201h.01M1307 201h.01M1153 202h.01M1154 202h.01M1158 202h.01M1188 202h.01M1259 202h.01M855 203h.01M1071 203h.01M1137 203h.01M1156 203h.01M1157 203h.01M1244 203h.01M1247 203h.01M1256 203h.01M1270 203h.01M1157 204h.01M1247 204h.01M1253 204h.01M1259 204h.01M1265 204h.01M1266 204h.01M1277 204h.01M750 205h.01M978 205h.01M1249 205h.01M1263 205h.01M1267 205h.01M1272 205h.01M1280 205h.01M569 206h.01M1151 206h.01M1155 206h.01M1217 206h.01M1228 206h.01M1238 206h.01M1242 206h.01M1247 206h.01M1252 206h.01M1255 206h.01M1260 206h.01M1262 206h.01M1268 206h.01M1148 207h.01M1155 207h.01M1230 207h.01M1232 207h.01M1240 207h.01M1251 207h.01M1252 207h.01M1262 207h.01M1149 208h.01M1153 208h.01M1230 208h.01M1242 208h.01M1247 208h.01M1249 208h.01M1250 208h.01M1254 208h.01M1259 208h.01M1262 208h.01M1269 208h.01M1277 208h.01M1222 209h.01M1235 209h.01M1248 209h.01M1250 209h.01M1260 209h.01M1263 209h.01M1268 209h.01M1270 209h.01M1277 209h.01M1278 209h.01M1036 210h.01M1157 210h.01M1236 210h.01M1244 210h.01M1249 210h.01M1250 210h.01M1252 210h.01M1254 210h.01M1262 210h.01M1266 210h.01M1047 211h.01M1151 211h.01M1155 211h.01M1156 211h.01M1235 211h.01M1244 211h.01M1253 211h.01M1254 211h.01M1262 211h.01M1265 211h.01M1267 211h.01M1150 212h.01M1153 212h.01M1156 212h.01M1236 212h.01M1238 212h.01M1152 213h.01M1236 213h.01M1237 213h.01M1249 213h.01M1259 213h.01M1263 213h.01M1266 213h.01M1273 213h.01M1153 214h.01M1156 214h.01M1160 214h.01M1219 214h.01M1227 214h.01M1239 214h.01M1248 214h.01M1271 214h.01M1155 215h.01M1235 215h.01M1251 215h.01M1269 215h.01M1275 215h.01M1152 216h.01M1153 216h.01M1236 216h.01M1237 216h.01M1245 216h.01M1252 216h.01M489 217h.01M933 217h.01M975 217h.01M1153 217h.01M1158 217h.01M1240 217h.01M1244 217h.01M1249 217h.01M1251 217h.01M1269 217h.01M1161 218h.01M1248 218h.01M1260 218h.01M1268 218h.01M1230 219h.01M1231 219h.01M1233 219h.01M1234 219h.01M1239 219h.01M1263 219h.01M1264 219h.01M1269 219h.01M1117 220h.01M1230 220h.01M1244 220h.01M1247 220h.01M1250 220h.01M1262 220h.01M1264 220h.01M1265 220h.01M1266 220h.01M1152 221h.01M1227 221h.01M1236 221h.01M1240 221h.01M1248 221h.01M1254 221h.01M1255 221h.01M1256 221h.01M1262 221h.01M1264 221h.01M1165 222h.01M1235 222h.01M1236 222h.01M1237 222h.01M1238 222h.01M1250 222h.01M1251 222h.01M1252 222h.01M957 223h.01M1055 223h.01M1159 223h.01M1233 223h.01M1239 223h.01M1270 223h.01M1289 223h.01M942 224h.01M1147 224h.01M1151 224h.01M1154 224h.01M1155 224h.01M1214 224h.01M1244 224h.01M1316 224h.01M1154 225h.01M1227 225h.01M1235 225h.01M1237 225h.01M1239 225h.01M1248 225h.01M1250 225h.01M1251 225h.01M1258 225h.01M1261 225h.01M1262 225h.01M619 226h.01M1232 226h.01M1246 226h.01M1254 226h.01M1232 227h.01M1239 227h.01M1241 227h.01M1242 227h.01M1267 227h.01M1276 227h.01M1232 228h.01M1247 228h.01M1248 228h.01M1250 228h.01M1255 228h.01M1237 229h.01M1238 229h.01M1244 229h.01M1247 229h.01M1264 229h.01M1265 229h.01M1275 229h.01M768 230h.01M894 230h.01M1006 230h.01M1149 230h.01M1234 230h.01M1236 230h.01M1248 230h.01M1252 230h.01M1254 230h.01M1260 230h.01M1271 230h.01M1157 231h.01M1233 231h.01M1246 231h.01M1248 231h.01M1251 231h.01M1254 231h.01M1255 231h.01M1271 231h.01M1149 232h.01M1236 232h.01M1241 232h.01M1251 232h.01M1258 232h.01M1260 232h.01M1264 232h.01M1101 233h.01M1239 233h.01M1244 233h.01M1245 233h.01M1246 233h.01M1251 233h.01M1262 233h.01M1266 233h.01M778 234h.01M1148 234h.01M1228 234h.01M1237 234h.01M1242 234h.01M1246 234h.01M1251 234h.01M1253 234h.01M1151 235h.01M1238 235h.01M1263 235h.01M990 236h.01M1237 236h.01M1239 236h.01M1244 236h.01M1251 236h.01M1252 236h.01M1262 236h.01M249 237h.01M1050 237h.01M1153 237h.01M1238 237h.01M1241 237h.01M1245 237h.01M1246 237h.01M1247 237h.01M1250 237h.01M1251 237h.01M1260 237h.01M1261 237h.01M1318 237h.01M1156 238h.01M1242 238h.01M1254 238h.01M1154 239h.01M1244 239h.01M1245 239h.01M1250 239h.01M1251 239h.01M1262 239h.01M1266 239h.01M1242 240h.01M1248 240h.01M1251 240h.01M641 241h.01M1155 241h.01M1239 241h.01M1247 241h.01M1260 241h.01M1261 241h.01M1263 241h.01M1155 242h.01M1240 242h.01M1242 242h.01M1254 242h.01M1262 242h.01M1264 242h.01M802 243h.01M1152 243h.01M1154 243h.01M1079 244h.01M1154 244h.01M1238 244h.01M1261 244h.01M1152 245h.01M1207 245h.01M1242 245h.01M1259 245h.01M1261 245h.01M960 246h.01M1155 246h.01M1156 246h.01M1240 246h.01M1241 246h.01M1251 246h.01M892 247h.01M1147 247h.01M1207 247h.01M1252 247h.01M1254 247h.01M1259 247h.01M1260 247h.01M1240 248h.01M1248 248h.01M1250 248h.01M665 249h.01M1149 249h.01M1152 249h.01M1242 249h.01M1246 249h.01M1262 249h.01M1264 249h.01M1317 249h.01M794 250h.01M1008 250h.01M1150 250h.01M1151 250h.01M1157 250h.01M1241 250h.01M1242 250h.01M1245 250h.01M1248 250h.01M1253 250h.01M1255 250h.01M1259 250h.01M1264 250h.01M1239 251h.01M1240 251h.01M1245 251h.01M1257 251h.01M1261 251h.01M235 252h.01M394 252h.01M1152 252h.01M1246 252h.01M1247 252h.01M1254 252h.01M735 253h.01M1247 253h.01M1259 253h.01M1157 254h.01M1255 254h.01M1256 254h.01M1316 254h.01M960 255h.01M1152 255h.01M1239 255h.01M1240 255h.01M1255 255h.01M1260 255h.01M1261 255h.01M919 256h.01M1153 256h.01M1247 256h.01M1167 257h.01M1247 257h.01M1252 257h.01M1254 257h.01M1263 257h.01M1269 257h.01M1242 258h.01M1251 258h.01M1257 258h.01M1259 258h.01M1260 258h.01M1235 259h.01M1244 259h.01M1247 259h.01M1260 259h.01M1261 259h.01M1147 260h.01M1243 260h.01M1244 260h.01M1255 260h.01M1261 260h.01M1246 261h.01M1255 261h.01M1256 261h.01M1258 261h.01M1261 261h.01M1255 262h.01M1261 262h.01M221 263h.01M1150 263h.01M1151 263h.01M1261 263h.01M1152 264h.01M1254 264h.01M1256 264h.01M1257 264h.01M1260 264h.01M1240 265h.01M1244 265h.01M1250 265h.01M1260 265h.01M1264 265h.01M1094 266h.01M1152 266h.01M1157 266h.01M1244 266h.01M1247 266h.01M1254 266h.01M1260 266h.01M1239 267h.01M1245 267h.01M1246 267h.01M1247 267h.01M1255 267h.01M1258 267h.01M1149 268h.01M1241 268h.01M1254 268h.01M1250 269h.01M1242 270h.01M1255 270h.01M1258 270h.01M828 271h.01M1155 271h.01M1240 271h.01M1253 271h.01M1257 271h.01M1261 271h.01M1153 272h.01M1242 272h.01M1240 273h.01M1245 273h.01M1254 273h.01M578 274h.01M1257 274h.01M1258 274h.01M1250 275h.01M1253 275h.01M1259 275h.01M897 276h.01M1002 276h.01M1244 276h.01M1255 276h.01M1256 276h.01M617 277h.01M1243 277h.01M1252 277h.01M1257 277h.01M909 278h.01M1105 279h.01M1252 279h.01M1256 280h.01M1078 281h.01M1242 281h.01M1243 281h.01M1245 281h.01M1253 281h.01M1257 281h.01M1050 282h.01M1239 282h.01M1240 282h.01M1244 283h.01M1125 284h.01M1242 284h.01M1256 284h.01M1254 285h.01M1255 285h.01M1256 285h.01M1258 285h.01M1240 287h.01M1241 287h.01M1242 287h.01M1252 287h.01M1255 287h.01M1234 288h.01M1240 288h.01M1252 288h.01M1242 289h.01M1244 289h.01M1253 289h.01M1244 290h.01M1246 291h.01M1258 291h.01M956 292h.01M1242 292h.01M1220 293h.01M1049 294h.01M1274 294h.01M1245 296h.01M1254 296h.01M265 297h.01M665 297h.01M1255 297h.01M1254 298h.01M1243 299h.01M1256 299h.01M1242 300h.01M1242 301h.01M1254 301h.01M1317 301h.01M1253 303h.01M1270 303h.01M349 304h.01M1242 304h.01M1243 304h.01M1258 305h.01M1099 306h.01M1254 306h.01M955 307h.01M1264 307h.01M527 308h.01M1164 308h.01M1255 308h.01M1020 310h.01M539 311h.01M840 313h.01M1049 315h.01M1239 315h.01M838 316h.01M1255 316h.01M1252 317h.01M973 319h.01M1202 321h.01M941 322h.01M1315 322h.01M1293 323h.01M932 325h.01M956 325h.01M1076 326h.01M1291 327h.01M1066 333h.01M1292 336h.01M312 355h.01M1247 359h.01M900 363h.01M1150 372h.01M557 374h.01" stroke="#fff" stroke-opacity="0.27" stroke-width="1.25" stroke-linecap="round" fill="none"/><path d="M1262 124h.01M1264 127h.01M1261 129h.01M1245 130h.01M1244 131h.01M1256 132h.01M1246 133h.01M1258 133h.01M1260 133h.01M1259 134h.01M1262 134h.01M1261 135h.01M1260 136h.01M1262 136h.01M1158 137h.01M1248 137h.01M1260 137h.01M1243 140h.01M1260 140h.01M1261 140h.01M1244 141h.01M1244 142h.01M1245 142h.01M1263 142h.01M1244 143h.01M1156 144h.01M1247 146h.01M1258 146h.01M1244 148h.01M1245 148h.01M1246 149h.01M1258 149h.01M1261 149h.01M1244 150h.01M1259 150h.01M1262 150h.01M1159 151h.01M1256 152h.01M1259 152h.01M1247 153h.01M1256 153h.01M1257 153h.01M1259 153h.01M1261 153h.01M1254 154h.01M1256 154h.01M1257 154h.01M1263 154h.01M1154 155h.01M1247 155h.01M1263 155h.01M1245 156h.01M1246 156h.01M1248 156h.01M1244 157h.01M1258 157h.01M1263 157h.01M1157 158h.01M1259 158h.01M1261 158h.01M1257 159h.01M1258 159h.01M1153 160h.01M1258 160h.01M1157 161h.01M1258 161h.01M1262 161h.01M1244 162h.01M1255 162h.01M1152 164h.01M1241 164h.01M1245 164h.01M1257 164h.01M1263 164h.01M1157 165h.01M1262 165h.01M1251 166h.01M1242 167h.01M1258 167h.01M1261 167h.01M1159 168h.01M1253 168h.01M1260 168h.01M1262 168h.01M1241 169h.01M1243 169h.01M1248 169h.01M1257 169h.01M1156 170h.01M1246 170h.01M1255 170h.01M1160 171h.01M1257 171h.01M1258 171h.01M1261 171h.01M1153 172h.01M1240 172h.01M1246 172h.01M1243 173h.01M1246 173h.01M1255 173h.01M1256 173h.01M1260 173h.01M1243 174h.01M1245 174h.01M1247 174h.01M1255 174h.01M1261 174h.01M1248 175h.01M1256 175h.01M1156 176h.01M1241 176h.01M1246 176h.01M1257 176h.01M1261 176h.01M1244 177h.01M1246 177h.01M1156 178h.01M1157 178h.01M1257 178h.01M1261 178h.01M1264 178h.01M1241 179h.01M1248 179h.01M1250 180h.01M1256 180h.01M1258 180h.01M1263 180h.01M1265 180h.01M1154 181h.01M1156 181h.01M1244 181h.01M1248 181h.01M1263 181h.01M1257 183h.01M1258 183h.01M1242 184h.01M1254 184h.01M1257 184h.01M1266 184h.01M1241 185h.01M1248 185h.01M1253 185h.01M1255 185h.01M1258 185h.01M1262 185h.01M1153 186h.01M1157 186h.01M1240 186h.01M1243 186h.01M1263 186h.01M1264 186h.01M1156 187h.01M1245 187h.01M1246 187h.01M1255 187h.01M1256 187h.01M1153 188h.01M1155 188h.01M1239 188h.01M1247 188h.01M1253 188h.01M1267 188h.01M1153 189h.01M1243 190h.01M1247 190h.01M1256 190h.01M1258 190h.01M1259 190h.01M1239 192h.01M1255 192h.01M1257 192h.01M1262 192h.01M1268 192h.01M1152 193h.01M1154 193h.01M1240 193h.01M1241 193h.01M1259 193h.01M1260 193h.01M1237 194h.01M1247 194h.01M1263 194h.01M1237 195h.01M1239 195h.01M1240 195h.01M1251 195h.01M1261 195h.01M1264 195h.01M1247 196h.01M1240 197h.01M1246 197h.01M1255 197h.01M1256 197h.01M1262 197h.01M1263 197h.01M1155 198h.01M1161 198h.01M1244 198h.01M1246 198h.01M1248 198h.01M1249 198h.01M1256 198h.01M1261 198h.01M1263 198h.01M1264 198h.01M1155 199h.01M1156 199h.01M1241 199h.01M1248 199h.01M1261 199h.01M1244 200h.01M1258 200h.01M1262 200h.01M1152 201h.01M1159 201h.01M1240 201h.01M1245 201h.01M1247 201h.01M1250 201h.01M1262 201h.01M1252 202h.01M1255 202h.01M1317 202h.01M1235 203h.01M1240 203h.01M1246 203h.01M1250 203h.01M1253 203h.01M1259 203h.01M1267 203h.01M1153 204h.01M1246 204h.01M1252 204h.01M1254 204h.01M1233 205h.01M1240 205h.01M1247 205h.01M1253 205h.01M1230 206h.01M1239 206h.01M1263 206h.01M1266 206h.01M1273 206h.01M1231 207h.01M1236 207h.01M1244 207h.01M1253 207h.01M1257 207h.01M1266 207h.01M1238 208h.01M1243 208h.01M1263 208h.01M1243 209h.01M1245 209h.01M1247 209h.01M1251 209h.01M1253 209h.01M1234 210h.01M1248 210h.01M1251 210h.01M1261 210h.01M1264 210h.01M1233 211h.01M1247 211h.01M1260 211h.01M1241 212h.01M1242 212h.01M1258 212h.01M1267 212h.01M1268 212h.01M1240 213h.01M1243 213h.01M1248 213h.01M1151 214h.01M1241 214h.01M1243 214h.01M1252 214h.01M1258 214h.01M1264 214h.01M1269 214h.01M1256 215h.01M1267 215h.01M1155 216h.01M1251 216h.01M1261 216h.01M1315 216h.01M1152 217h.01M1246 217h.01M1256 217h.01M1257 217h.01M1270 217h.01M1237 218h.01M1241 218h.01M1243 218h.01M1245 218h.01M1249 218h.01M1148 219h.01M1236 219h.01M1246 219h.01M1249 219h.01M1266 219h.01M1153 220h.01M1242 220h.01M1243 220h.01M1253 220h.01M1260 220h.01M1157 221h.01M1230 221h.01M1249 221h.01M1260 221h.01M1261 221h.01M1263 221h.01M1151 222h.01M1240 222h.01M1241 222h.01M1243 223h.01M1245 223h.01M1256 223h.01M1259 223h.01M1160 224h.01M1241 224h.01M1248 224h.01M1250 224h.01M1253 224h.01M1261 224h.01M1262 224h.01M1242 225h.01M1253 225h.01M1264 225h.01M1234 226h.01M1237 226h.01M1238 226h.01M1251 226h.01M1252 226h.01M1261 226h.01M1262 226h.01M1266 226h.01M1258 227h.01M1262 227h.01M1259 228h.01M1260 228h.01M1262 228h.01M1246 229h.01M1248 229h.01M1241 230h.01M1261 230h.01M1262 230h.01M1263 230h.01M1236 231h.01M1239 231h.01M1261 231h.01M1244 232h.01M1249 232h.01M1252 232h.01M1254 232h.01M1255 232h.01M1261 232h.01M1248 233h.01M1258 233h.01M1263 233h.01M1269 233h.01M1149 234h.01M1158 234h.01M1240 234h.01M1243 234h.01M1248 234h.01M1252 234h.01M1261 234h.01M1240 235h.01M1247 235h.01M1253 235h.01M1255 235h.01M1259 235h.01M1260 235h.01M1151 236h.01M1153 236h.01M1243 237h.01M1244 237h.01M1255 237h.01M1266 237h.01M1157 238h.01M1259 238h.01M1262 238h.01M1252 239h.01M1253 239h.01M1254 239h.01M1261 239h.01M1159 240h.01M1240 240h.01M1253 240h.01M1261 240h.01M1240 241h.01M1253 241h.01M1228 242h.01M1252 242h.01M1240 243h.01M1242 243h.01M1245 243h.01M1237 244h.01M1241 244h.01M1242 244h.01M1240 245h.01M1247 245h.01M1252 245h.01M1262 245h.01M1242 246h.01M1252 246h.01M1254 246h.01M1257 246h.01M1259 246h.01M1153 247h.01M1239 247h.01M1253 247h.01M1256 247h.01M1261 247h.01M1253 248h.01M1258 248h.01M1259 248h.01M1262 248h.01M1239 249h.01M1245 249h.01M1249 249h.01M1252 249h.01M1254 249h.01M1243 251h.01M1249 251h.01M1251 251h.01M1252 251h.01M1238 252h.01M1252 252h.01M1256 252h.01M1153 253h.01M1243 253h.01M1257 253h.01M1238 254h.01M1243 254h.01M1245 254h.01M1151 255h.01M1256 255h.01M1241 256h.01M1243 258h.01M1245 258h.01M1242 259h.01M1245 259h.01M1251 259h.01M1253 259h.01M1156 260h.01M1253 260h.01M1260 260h.01M1238 261h.01M1242 261h.01M1256 262h.01M1242 263h.01M1244 263h.01M1239 264h.01M1246 264h.01M1255 264h.01M1241 265h.01M1254 265h.01M1256 265h.01M1257 265h.01M1242 266h.01M1255 266h.01M1258 266h.01M1259 266h.01M1253 267h.01M1257 267h.01M1260 267h.01M1261 268h.01M1256 269h.01M1259 269h.01M1244 270h.01M1245 270h.01M1260 270h.01M1242 271h.01M1243 271h.01M1255 271h.01M1258 271h.01M1259 271h.01M1239 272h.01M1243 272h.01M1256 272h.01M1257 273h.01M1240 274h.01M1245 274h.01M1252 275h.01M1257 275h.01M1244 278h.01M1254 278h.01M1255 278h.01M1259 278h.01M1243 279h.01M1244 280h.01M1253 280h.01M1241 281h.01M1245 282h.01M1258 282h.01M1257 283h.01M1258 283h.01M1240 284h.01M1243 286h.01M1254 286h.01M1255 286h.01M1243 287h.01M1254 287h.01M1243 289h.01M1239 290h.01M1244 291h.01M1258 293h.01M1255 294h.01M1242 295h.01M1241 296h.01M1255 301h.01" stroke="#fff" stroke-opacity="0.42" stroke-width="1.25" stroke-linecap="round" fill="none"/><path d="M1261 130h.01M1260 132h.01M1246 136h.01M1244 137h.01M1245 138h.01M1262 138h.01M1259 143h.01M1245 144h.01M1259 144h.01M1261 144h.01M1241 149h.01M1245 149h.01M1244 151h.01M1259 151h.01M1257 152h.01M1264 152h.01M1245 155h.01M1258 155h.01M1261 155h.01M1257 156h.01M1259 156h.01M1246 157h.01M1261 157h.01M1262 158h.01M1260 159h.01M1261 159h.01M1243 160h.01M1245 161h.01M1256 161h.01M1261 161h.01M1245 162h.01M1263 163h.01M1262 164h.01M1245 165h.01M1259 165h.01M1260 165h.01M1242 166h.01M1156 167h.01M1245 167h.01M1256 167h.01M1243 168h.01M1245 168h.01M1260 170h.01M1256 171h.01M1259 171h.01M1262 171h.01M1244 172h.01M1245 172h.01M1254 172h.01M1246 174h.01M1243 175h.01M1257 175h.01M1258 175h.01M1260 175h.01M1261 175h.01M1243 176h.01M1245 176h.01M1241 177h.01M1263 177h.01M1158 178h.01M1246 178h.01M1247 178h.01M1258 178h.01M1246 179h.01M1259 179h.01M1260 179h.01M1262 179h.01M1255 180h.01M1257 180h.01M1262 180h.01M1158 181h.01M1241 181h.01M1257 181h.01M1254 182h.01M1256 182h.01M1257 182h.01M1260 182h.01M1263 182h.01M1246 183h.01M1260 183h.01M1238 184h.01M1241 184h.01M1246 184h.01M1261 184h.01M1264 184h.01M1243 185h.01M1244 185h.01M1256 185h.01M1249 186h.01M1256 186h.01M1260 186h.01M1253 187h.01M1254 187h.01M1258 187h.01M1261 187h.01M1259 188h.01M1260 188h.01M1259 189h.01M1260 189h.01M1264 189h.01M1155 190h.01M1239 190h.01M1242 190h.01M1257 190h.01M1260 190h.01M1242 191h.01M1253 191h.01M1243 192h.01M1253 192h.01M1245 193h.01M1247 193h.01M1249 193h.01M1255 195h.01M1250 196h.01M1248 197h.01M1249 197h.01M1257 197h.01M1243 198h.01M1247 198h.01M1253 198h.01M1257 198h.01M1252 199h.01M1256 199h.01M1245 200h.01M1247 200h.01M1253 200h.01M1259 200h.01M1255 201h.01M1239 202h.01M1246 202h.01M1247 202h.01M1253 202h.01M1254 202h.01M1248 203h.01M1249 203h.01M1252 203h.01M1264 203h.01M1241 204h.01M1243 204h.01M1255 204h.01M1268 204h.01M1152 205h.01M1239 205h.01M1246 205h.01M1259 205h.01M1261 205h.01M1240 206h.01M1241 206h.01M1246 206h.01M1238 207h.01M1246 207h.01M1247 207h.01M1248 207h.01M1250 207h.01M1259 207h.01M1236 208h.01M1246 209h.01M1252 209h.01M1254 209h.01M1256 209h.01M1240 210h.01M1247 210h.01M1256 210h.01M1154 211h.01M1242 211h.01M1246 211h.01M1258 211h.01M1259 211h.01M1243 212h.01M1252 212h.01M1256 212h.01M1259 212h.01M1260 212h.01M1239 213h.01M1242 213h.01M1245 213h.01M1250 213h.01M1261 213h.01M1247 214h.01M1249 214h.01M1256 214h.01M1243 215h.01M1253 215h.01M1255 215h.01M1257 215h.01M1250 216h.01M1253 216h.01M1260 216h.01M1241 217h.01M1245 217h.01M1247 217h.01M1253 217h.01M1264 217h.01M1238 218h.01M1259 218h.01M1261 218h.01M1238 219h.01M1239 220h.01M1252 221h.01M1258 221h.01M1248 222h.01M1255 222h.01M1256 222h.01M1264 222h.01M1244 223h.01M1255 223h.01M1258 223h.01M1256 224h.01M1241 225h.01M1244 225h.01M1246 225h.01M1255 225h.01M1244 226h.01M1248 226h.01M1256 226h.01M1244 227h.01M1245 227h.01M1251 227h.01M1244 228h.01M1245 228h.01M1254 228h.01M1258 228h.01M1242 229h.01M1243 229h.01M1244 230h.01M1246 230h.01M1256 230h.01M1257 230h.01M1243 232h.01M1253 232h.01M1263 232h.01M1240 233h.01M1254 233h.01M1255 233h.01M1154 235h.01M1252 235h.01M1247 236h.01M1258 236h.01M1260 236h.01M1249 237h.01M1254 237h.01M1246 238h.01M1256 238h.01M1257 238h.01M1261 238h.01M1247 239h.01M1259 239h.01M1239 240h.01M1254 240h.01M1263 240h.01M1242 241h.01M1252 241h.01M1244 242h.01M1245 242h.01M1255 243h.01M1256 243h.01M1261 243h.01M1253 244h.01M1243 245h.01M1245 246h.01M1246 246h.01M1256 246h.01M1261 246h.01M1245 247h.01M1242 248h.01M1257 248h.01M1240 249h.01M1251 250h.01M1256 250h.01M1244 251h.01M1248 251h.01M1254 251h.01M1242 252h.01M1256 253h.01M1261 254h.01M1241 255h.01M1255 256h.01M1240 257h.01M1242 257h.01M1256 257h.01M1254 258h.01M1255 259h.01M1245 260h.01M1256 260h.01M1241 262h.01M1243 263h.01M1252 266h.01M1253 268h.01M1258 269h.01M1151 271h.01M1253 272h.01M1257 272h.01M1255 273h.01M1243 274h.01M1254 274h.01M1255 275h.01M1258 275h.01M1242 278h.01M1257 279h.01M1258 284h.01M1256 286h.01M1243 292h.01M1257 292h.01M1243 294h.01M1256 297h.01M1256 301h.01" stroke="#fff" stroke-opacity="0.62" stroke-width="1.25" stroke-linecap="round" fill="none"/><path d="M1260 135h.01M1258 139h.01M1261 142h.01M1245 146h.01M1260 146h.01M1259 149h.01M1260 149h.01M1245 151h.01M1258 152h.01M1260 156h.01M1257 157h.01M1241 159h.01M1242 160h.01M1243 162h.01M1260 162h.01M1245 163h.01M1259 163h.01M1260 163h.01M1258 164h.01M1259 164h.01M1243 166h.01M1247 166h.01M1258 166h.01M1260 167h.01M1244 168h.01M1246 168h.01M1259 168h.01M1261 169h.01M1259 170h.01M1257 172h.01M1259 172h.01M1261 172h.01M1245 173h.01M1258 173h.01M1245 175h.01M1247 175h.01M1247 177h.01M1243 178h.01M1256 178h.01M1243 179h.01M1245 179h.01M1255 179h.01M1261 179h.01M1243 180h.01M1245 180h.01M1247 180h.01M1259 180h.01M1261 180h.01M1242 181h.01M1246 181h.01M1258 181h.01M1259 181h.01M1262 181h.01M1243 182h.01M1245 182h.01M1247 182h.01M1243 183h.01M1245 183h.01M1248 183h.01M1255 183h.01M1244 184h.01M1245 184h.01M1262 184h.01M1242 185h.01M1245 185h.01M1259 185h.01M1260 185h.01M1247 186h.01M1258 186h.01M1241 187h.01M1243 187h.01M1257 187h.01M1260 187h.01M1242 188h.01M1243 188h.01M1244 188h.01M1245 188h.01M1258 188h.01M1241 189h.01M1242 189h.01M1245 189h.01M1246 189h.01M1255 189h.01M1257 189h.01M1258 189h.01M1261 189h.01M1244 190h.01M1245 190h.01M1255 190h.01M1261 190h.01M1243 191h.01M1244 191h.01M1245 191h.01M1246 191h.01M1256 191h.01M1257 191h.01M1259 191h.01M1260 191h.01M1241 192h.01M1242 192h.01M1244 192h.01M1256 192h.01M1258 192h.01M1259 192h.01M1260 192h.01M1244 193h.01M1246 193h.01M1257 193h.01M1258 193h.01M1262 193h.01M1244 194h.01M1255 194h.01M1257 194h.01M1259 194h.01M1260 194h.01M1261 194h.01M1242 195h.01M1258 195h.01M1242 196h.01M1243 196h.01M1244 196h.01M1245 196h.01M1254 196h.01M1255 196h.01M1258 196h.01M1260 196h.01M1241 197h.01M1243 197h.01M1244 197h.01M1245 197h.01M1254 197h.01M1258 197h.01M1259 197h.01M1262 198h.01M1239 199h.01M1243 199h.01M1244 199h.01M1246 199h.01M1258 199h.01M1259 199h.01M1260 199h.01M1263 199h.01M1243 200h.01M1246 200h.01M1256 200h.01M1257 200h.01M1266 200h.01M1242 201h.01M1244 201h.01M1256 201h.01M1258 201h.01M1260 201h.01M1241 202h.01M1242 202h.01M1243 202h.01M1244 202h.01M1256 202h.01M1257 202h.01M1258 202h.01M1260 202h.01M1262 202h.01M1264 202h.01M1241 203h.01M1243 203h.01M1245 203h.01M1254 203h.01M1255 203h.01M1257 203h.01M1258 203h.01M1263 203h.01M1240 204h.01M1242 204h.01M1244 204h.01M1248 204h.01M1249 204h.01M1256 204h.01M1258 204h.01M1260 204h.01M1261 204h.01M1262 204h.01M1241 205h.01M1243 205h.01M1255 205h.01M1256 205h.01M1257 205h.01M1258 205h.01M1260 205h.01M1244 206h.01M1253 206h.01M1254 206h.01M1256 206h.01M1257 206h.01M1258 206h.01M1259 206h.01M1242 207h.01M1245 207h.01M1254 207h.01M1255 207h.01M1256 207h.01M1260 207h.01M1241 208h.01M1244 208h.01M1255 208h.01M1257 208h.01M1258 208h.01M1261 208h.01M1241 209h.01M1242 209h.01M1244 209h.01M1255 209h.01M1261 209h.01M1243 210h.01M1255 210h.01M1257 210h.01M1258 210h.01M1259 210h.01M1238 211h.01M1241 211h.01M1245 211h.01M1255 211h.01M1256 211h.01M1257 211h.01M1261 211h.01M1240 212h.01M1244 212h.01M1247 212h.01M1251 212h.01M1257 212h.01M1261 212h.01M1238 213h.01M1241 213h.01M1244 213h.01M1246 213h.01M1247 213h.01M1252 213h.01M1253 213h.01M1255 213h.01M1256 213h.01M1257 213h.01M1258 213h.01M1242 214h.01M1244 214h.01M1246 214h.01M1254 214h.01M1255 214h.01M1257 214h.01M1260 214h.01M1262 214h.01M1240 215h.01M1244 215h.01M1248 215h.01M1258 215h.01M1261 215h.01M1242 216h.01M1243 216h.01M1244 216h.01M1246 216h.01M1254 216h.01M1255 216h.01M1257 216h.01M1258 216h.01M1263 216h.01M1242 217h.01M1243 217h.01M1255 217h.01M1258 217h.01M1259 217h.01M1260 217h.01M1262 217h.01M1242 218h.01M1244 218h.01M1246 218h.01M1247 218h.01M1253 218h.01M1255 218h.01M1256 218h.01M1257 218h.01M1258 218h.01M1151 219h.01M1240 219h.01M1241 219h.01M1242 219h.01M1244 219h.01M1251 219h.01M1252 219h.01M1253 219h.01M1255 219h.01M1256 219h.01M1258 219h.01M1259 219h.01M1241 220h.01M1245 220h.01M1246 220h.01M1254 220h.01M1255 220h.01M1257 220h.01M1259 220h.01M1242 221h.01M1243 221h.01M1244 221h.01M1245 221h.01M1247 221h.01M1253 221h.01M1257 221h.01M1239 222h.01M1244 222h.01M1245 222h.01M1246 222h.01M1247 222h.01M1253 222h.01M1254 222h.01M1257 222h.01M1258 222h.01M1261 222h.01M1262 222h.01M1253 223h.01M1254 223h.01M1257 223h.01M1260 223h.01M1261 223h.01M1240 224h.01M1242 224h.01M1243 224h.01M1247 224h.01M1255 224h.01M1257 224h.01M1259 224h.01M1243 225h.01M1245 225h.01M1254 225h.01M1256 225h.01M1257 225h.01M1259 225h.01M1240 226h.01M1241 226h.01M1243 226h.01M1253 226h.01M1255 226h.01M1257 226h.01M1258 226h.01M1259 226h.01M1260 226h.01M1243 227h.01M1253 227h.01M1254 227h.01M1255 227h.01M1257 227h.01M1259 227h.01M1260 227h.01M1261 227h.01M1241 228h.01M1242 228h.01M1243 228h.01M1256 228h.01M1257 228h.01M1241 229h.01M1250 229h.01M1252 229h.01M1253 229h.01M1255 229h.01M1256 229h.01M1257 229h.01M1258 229h.01M1259 229h.01M1260 229h.01M1261 229h.01M1262 229h.01M1239 230h.01M1245 230h.01M1253 230h.01M1258 230h.01M1243 231h.01M1256 231h.01M1257 231h.01M1242 232h.01M1256 232h.01M1257 232h.01M1259 232h.01M1241 233h.01M1243 233h.01M1253 233h.01M1257 233h.01M1261 233h.01M1244 234h.01M1255 234h.01M1243 235h.01M1244 235h.01M1254 235h.01M1256 235h.01M1258 235h.01M1241 236h.01M1242 236h.01M1243 236h.01M1246 236h.01M1253 236h.01M1255 236h.01M1257 236h.01M1259 236h.01M1261 236h.01M1240 237h.01M1242 237h.01M1253 237h.01M1256 237h.01M1257 237h.01M1258 237h.01M1259 237h.01M1239 238h.01M1241 238h.01M1244 238h.01M1255 238h.01M1257 239h.01M1258 239h.01M1260 239h.01M1243 240h.01M1244 240h.01M1257 240h.01M1260 240h.01M1241 241h.01M1243 241h.01M1254 241h.01M1255 241h.01M1256 241h.01M1257 241h.01M1258 241h.01M1259 241h.01M1243 242h.01M1255 242h.01M1257 242h.01M1244 243h.01M1253 243h.01M1258 243h.01M1254 244h.01M1256 244h.01M1257 244h.01M1258 244h.01M1259 244h.01M1260 244h.01M1254 245h.01M1255 245h.01M1256 245h.01M1258 245h.01M1244 246h.01M1253 246h.01M1255 246h.01M1258 246h.01M1242 247h.01M1243 247h.01M1257 247h.01M1243 248h.01M1244 248h.01M1256 248h.01M1256 249h.01M1258 249h.01M1252 250h.01M1253 251h.01M1255 251h.01M1256 251h.01M1241 252h.01M1243 252h.01M1241 253h.01M1258 253h.01M1260 253h.01M1244 254h.01M1259 254h.01M1242 255h.01M1244 255h.01M1254 255h.01M1257 255h.01M1258 255h.01M1243 256h.01M1245 256h.01M1246 256h.01M1256 256h.01M1258 256h.01M1245 257h.01M1258 257h.01M1259 257h.01M1243 259h.01M1254 259h.01M1256 259h.01M1257 259h.01M1244 261h.01M1254 261h.01M1253 262h.01M1241 263h.01M1255 263h.01M1256 263h.01M1258 263h.01M1241 264h.01M1242 264h.01M1259 264h.01M1258 265h.01M1244 268h.01M1246 268h.01M1255 268h.01M1255 269h.01M1259 272h.01M1256 274h.01M1242 276h.01M1254 281h.01M1256 287h.01M1256 289h.01M1256 296h.01" stroke="#fff" stroke-opacity="0.9" stroke-width="1.25" stroke-linecap="round" fill="none"/></g><path d="M88.6 86.5V399.5M88.6 89.4h-3.2M88.6 103.2h-3.2M88.6 116.9h-3.2M88.6 130.7h-3.2M88.6 144.4h-5.6M88.6 158.2h-3.2M88.6 171.9h-3.2M88.6 185.7h-3.2M88.6 199.4h-3.2M88.6 213.2h-5.6M88.6 226.9h-3.2M88.6 240.7h-3.2M88.6 254.4h-3.2M88.6 268.1h-3.2M88.6 281.9h-5.6M88.6 295.6h-3.2M88.6 309.4h-3.2M88.6 323.1h-3.2M88.6 336.9h-3.2M88.6 350.6h-5.6M88.6 364.4h-3.2M88.6 378.1h-3.2M88.6 391.9h-3.2M93 404.6H1428M130.7 404.6v3.1M200.6 404.6v5.2M270.5 404.6v3.1M340.5 404.6v3.1M410.4 404.6v3.1M480.4 404.6v3.1M550.3 404.6v5.2M620.2 404.6v3.1M690.2 404.6v3.1M760.1 404.6v3.1M830.1 404.6v3.1M900.0 404.6v5.2M969.9 404.6v3.1M1039.9 404.6v3.1M1109.8 404.6v3.1M1179.8 404.6v3.1M1249.7 404.6v5.2M1319.6 404.6v3.1M1389.6 404.6v3.1M87.5 469V831.5M87.5 831.0h-5.4M87.5 816.5h-3.0M87.5 802.1h-3.0M87.5 787.6h-3.0M87.5 773.1h-3.0M87.5 758.6h-5.4M87.5 744.2h-3.0M87.5 729.7h-3.0M87.5 715.2h-3.0M87.5 700.8h-3.0M87.5 686.3h-5.4M87.5 671.8h-3.0M87.5 657.4h-3.0M87.5 642.9h-3.0M87.5 628.4h-3.0M87.5 614.0h-5.4M87.5 599.5h-3.0M87.5 585.0h-3.0M87.5 570.5h-3.0M87.5 556.1h-3.0M87.5 541.6h-5.4M87.5 527.1h-3.0M87.5 512.7h-3.0M87.5 498.2h-3.0M87.5 483.7h-3.0M87.5 469.2h-5.4M92 835.7H1428M109.0 835.7v3.4M156.0 835.7v5.3M203.0 835.7v3.4M250.1 835.7v3.4M297.1 835.7v3.4M344.1 835.7v5.3M391.1 835.7v3.4M438.1 835.7v3.4M485.2 835.7v3.4M532.2 835.7v5.3M579.2 835.7v3.4M626.2 835.7v3.4M673.3 835.7v3.4M720.3 835.7v5.3M767.3 835.7v3.4M814.3 835.7v3.4M861.4 835.7v3.4M908.4 835.7v5.3M955.4 835.7v3.4M1002.4 835.7v3.4M1049.5 835.7v3.4M1096.5 835.7v5.3M1143.5 835.7v3.4M1190.5 835.7v3.4M1237.6 835.7v3.4M1284.6 835.7v5.3M1331.6 835.7v3.4M1378.6 835.7v3.4M1425.7 835.7v3.4" stroke="#b6b9bc" stroke-width="1.1" fill="none"/><path d="M91.0 830.9 93.3 830.9 95.7 830.5 98.0 830.5 102.7 830.9 105.1 830.9 107.4 830.9 109.8 830.9 112.1 830.9 114.5 830.9 116.8 830.9 121.5 830.9 123.9 830.9 126.2 830.9 130.9 830.6 135.6 830.9 140.3 830.9 142.7 830.9 145.0 830.9 149.7 830.9 152.1 830.9 154.4 830.9 156.8 830.9 159.1 830.9 163.8 830.9 166.2 830.9 170.9 830.6 173.2 830.9 175.6 830.9 180.3 830.9 185.0 830.9 189.7 830.9 192.0 830.6 196.7 830.9 199.1 830.9 203.8 830.9 206.1 830.9 208.5 830.9 213.2 830.9 215.5 830.9 217.9 830.9 220.2 830.9 224.9 830.9 227.3 830.9 229.6 830.9 234.3 830.9 236.7 830.9 239.0 830.9 241.4 830.9 246.1 830.9 250.8 830.9 253.1 830.9 257.8 830.9 262.5 830.9 267.2 830.9 269.6 830.9 271.9 830.9 276.6 830.6 279.0 830.9 283.7 830.6 286.0 830.6 290.7 830.6 293.1 830.9 297.8 830.9 302.5 830.9 304.8 830.9 307.2 830.9 311.9 830.9 314.2 830.9 316.6 830.9 318.9 830.6 321.3 830.8 323.6 830.1 326.0 830.6 328.3 830.9 333.0 830.6 335.4 830.1 340.1 830.9 344.8 830.9 347.1 830.6 349.5 830.9 351.8 830.9 354.2 830.9 356.5 830.6 358.9 830.9 361.2 830.9 363.6 830.9 366.0 830.9 368.3 830.9 373.0 830.9 377.7 830.9 380.1 830.9 384.8 830.9 389.5 830.6 394.2 830.6 396.5 830.9 401.2 830.9 403.6 830.9 405.9 830.9 408.3 830.9 413.0 830.9 415.3 830.9 417.7 830.9 420.0 830.9 422.4 830.9 427.1 830.9 429.4 830.9 434.1 830.9 438.8 830.9 441.2 830.9 443.5 830.9 445.9 830.9 448.2 830.9 452.9 830.9 455.3 830.9 457.6 830.9 460.0 830.9 462.3 830.9 464.7 830.9 467.0 830.9 469.4 830.9 474.1 830.9 478.8 830.9 481.1 830.5 483.5 830.3 485.8 830.2 490.5 830.6 492.9 829.7 497.6 830.7 502.3 830.9 507.0 830.7 511.7 829.4 516.4 826.7 518.7 825.8 521.1 825.9 525.8 828.6 528.1 829.5 530.5 830.4 532.8 830.8 535.2 830.6 537.5 830.9 542.2 830.9 544.6 830.6 546.9 830.9 549.3 830.9 551.6 830.9 556.3 830.9 558.7 830.9 563.4 830.9 565.7 830.9 568.1 830.9 570.4 830.9 572.8 830.8 575.1 830.6 579.8 830.0 582.2 830.2 586.9 830.8 591.6 830.8 596.3 830.3 598.6 830.5 601.0 830.4 603.3 830.1 608.0 830.9 610.4 830.6 612.7 830.9 615.1 830.6 617.4 830.6 619.8 830.8 622.1 830.0 624.5 830.6 626.8 830.6 629.2 830.9 633.9 830.0 638.6 830.4 640.9 829.7 645.6 830.9 648.0 830.9 652.7 831.1 655.0 829.7 659.7 830.9 662.1 830.9 664.4 830.9 666.8 830.9 669.1 829.7 671.5 829.7 673.8 830.4 678.5 830.0 680.9 830.9 685.6 830.4 687.9 831.1 692.6 829.7 695.0 829.7 697.3 829.7 699.7 829.7 704.4 830.9 706.7 830.9 711.4 830.9 713.8 830.9 716.1 830.0 720.8 831.1 723.2 829.7 725.5 830.4 730.2 829.7 734.9 829.7 737.3 830.9 742.0 830.9 744.3 830.9 746.7 830.9 749.0 829.7 751.4 829.7 753.7 830.9 756.1 830.4 760.8 829.7 765.5 829.7 767.8 831.1 770.2 830.0 774.9 829.7 777.2 829.7 779.6 831.1 784.3 830.4 789.0 830.9 791.3 830.9 793.7 830.9 796.0 830.0 798.4 830.9 803.1 830.9 805.4 830.9 807.8 831.1 810.1 830.9 812.5 831.1 817.2 831.1 819.5 830.9 821.9 830.9 824.2 830.9 828.9 830.9 831.3 830.0 833.6 831.1 836.0 830.9 840.7 830.0 845.4 830.0 847.7 830.0 850.1 830.4 852.4 830.9 857.1 830.4 859.5 830.4 864.2 830.0 866.5 831.1 868.9 830.0 871.2 829.7 875.9 830.4 880.6 830.9 883.0 830.9 885.3 830.9 887.7 830.4 890.0 830.9 892.4 830.9 894.7 831.1 897.1 830.0 899.4 829.7 904.1 829.7 906.5 831.1 908.8 830.9 911.2 830.9 915.9 830.9 918.2 830.9 920.6 830.9 925.3 830.9 927.6 830.9 932.3 830.9 934.7 830.4 937.0 830.0 939.4 830.4 944.1 830.0 946.4 829.7 948.8 830.9 953.5 831.1 955.8 830.9 958.2 830.4 960.5 830.9 962.9 830.4 967.6 830.4 972.3 830.9 974.6 830.0 979.3 831.1 981.7 830.4 984.0 830.9 986.4 830.9 988.7 830.9 993.4 829.7 998.1 830.9 1002.8 831.2 1005.2 831.2 1007.5 831.2 1012.2 831.2 1016.9 831.2 1021.6 830.0 1026.3 830.5 1028.7 829.9 1031.0 830.0 1033.4 829.0 1035.7 829.3 1038.1 830.2 1042.8 829.9 1045.1 830.5 1047.5 830.9 1052.2 831.1 1056.9 829.7 1061.6 829.3 1066.3 829.1 1068.6 830.8 1071.0 830.3 1073.3 831.1 1075.7 829.9 1078.0 829.9 1082.7 829.4 1085.1 829.9 1087.4 829.6 1089.8 830.0 1092.1 829.7 1094.5 830.7 1096.8 829.8 1101.5 830.3 1103.9 830.1 1106.2 830.7 1108.6 830.7 1110.9 831.0 1115.6 830.6 1118.0 830.6 1120.3 829.7 1125.0 829.8 1127.4 829.2 1132.1 828.0 1136.8 827.5 1139.1 827.8 1143.8 830.2 1146.2 829.3 1150.9 828.6 1155.6 828.9 1157.9 829.4 1162.6 830.7 1167.3 829.7 1169.7 829.7 1174.4 829.4 1176.7 828.8 1181.4 827.4 1183.8 827.7 1186.1 827.8 1190.8 828.6 1193.2 829.7 1195.5 828.4 1197.9 828.5 1200.0 827.8 1204.3 828.4 1207.5 826.5 1210.7 825.5 1213.4 823.3 1216.0 822.0 1218.7 816.4 1221.9 810.5 1223.5 799.8 1225.1 790.2 1226.5 779.5 1228.8 775.8 1231.0 771.0 1232.0 769.0 1232.8 768.6 1233.8 769.3 1234.7 772.0 1235.8 782.7 1236.9 794.5 1238.5 804.1 1239.7 812.6 1242.2 816.9 1245.9 821.2 1249.4 823.7 1253.1 823.1 1256.6 826.0 1260.9 827.1 1263.6 826.3 1266.2 827.1 1270.5 827.3 1273.7 828.5 1277.5 827.4 1281.2 826.5 1284.9 828.1 1288.1 826.5 1291.3 827.6 1294.0 826.5 1297.2 827.1 1301.5 825.5 1305.2 826.3 1307.9 826.3 1311.6 822.3 1316.5 819.6 1319.5 816.5 1321.5 812.9 1324.4 807.1 1327.3 798.5 1329.2 785.0 1330.8 771.5 1331.7 746.5 1332.5 717.7 1333.3 688.8 1333.9 670.0 1334.6 640.0 1335.3 600.0 1335.7 582.0 1336.3 575.5 1336.9 574.0 1337.4 578.0 1337.8 590.0 1338.6 620.0 1339.8 660.0 1341.7 698.5 1343.1 728.0 1343.9 741.0 1344.6 745.0 1345.3 741.0 1346.1 728.0 1347.5 708.0 1349.0 670.0 1350.7 576.8 1352.5 520.0 1353.4 488.0 1354.0 480.5 1354.6 488.0 1355.4 520.0 1356.9 576.8 1358.8 670.0 1359.6 688.8 1360.4 717.7 1361.3 746.5 1362.9 765.8 1364.8 783.0 1367.7 797.5 1370.6 803.3 1372.5 808.0 1376.3 813.8 1379.6 818.0 1382.1 821.5 1386.0 823.5 1388.8 824.0 1391.7 822.5 1395.6 825.4 1398.8 823.8 1403.3 825.0 1409.0 823.8 1412.9 825.0 1415.8 823.0 1418.7 815.8 1420.6 810.3 1421.5 809.0 1422.4 809.8 1423.5 812.5 1425.4 818.6 1427.3 824.4" stroke="#f2f2f2" stroke-width="1.6" fill="none" stroke-linejoin="round" stroke-linecap="round"/></svg>
<div class="a" style="left:8.40px;top:27px;letter-spacing:-0.267px;"><u>F</u>ile</div><div class="a" style="left:42.70px;top:27px;letter-spacing:0.030px;"><u>D</u>evice</div><div class="a" style="left:98.50px;top:27px;letter-spacing:0.075px;"><u>C</u>apture</div><div class="a" style="left:162.50px;top:27px;letter-spacing:-0.133px;"><u>V</u>iew</div><div class="a" style="left:206.50px;top:27px;letter-spacing:0.370px;"><u>W</u>indow</div><div class="a" style="left:272.25px;top:27px;letter-spacing:0.150px;">Tools</div><div class="a" style="left:319.00px;top:27px;letter-spacing:0.117px;"><u>H</u>elp</div>
<div class="a" style="left:5px;top:56px;width:1px;height:9px;background:#666b6e;"></div><div class="a" style="left:7px;top:56px;width:1px;height:9px;background:#666b6e;"></div><div class="a" style="left:18.75px;top:54px;letter-spacing:0.183px;">Setting</div><div class="a d" style="left:78.00px;top:54px;letter-spacing:-0.093px;">Realtime</div><div class="a d" style="left:146.75px;top:54px;letter-spacing:-0.008px;">CaptureSingle</div><div class="a d" style="left:249.45px;top:54px;letter-spacing:-0.093px;">CaptureSequence</div><div class="a d" style="left:375.25px;top:54px;letter-spacing:0.367px;">Stop</div><div class="a" style="left:419px;top:56px;width:1px;height:9px;background:#666b6e;"></div><div class="a" style="left:421px;top:56px;width:1px;height:9px;background:#666b6e;"></div><div class="a" style="left:432.75px;top:54px;letter-spacing:-0.283px;">Save Sequence</div><div class="a" style="left:543.50px;top:54px;letter-spacing:-0.519px;">Curve SEQ</div><div class="a" style="left:624px;top:56px;width:1px;height:9px;background:#4b5761;"></div><div class="a" style="left:641.15px;top:54px;">|</div><div class="a j" style="left:647.35px;top:54px;">◀</div><div class="a j" style="left:660.75px;top:54px;">◀</div><div class="a j" style="left:689.55px;top:54px;">◀</div><div class="a j" style="left:701.70px;top:54px;">-</div><div class="a j" style="left:723.80px;top:54px;">▶</div><div class="a j" style="left:751.30px;top:54px;">-</div><div class="a j" style="left:758.60px;top:54px;">▶</div><div class="a j" style="left:787.20px;top:54px;">▶</div><div class="a j" style="left:800.60px;top:54px;">▶</div><div class="a" style="left:812.35px;top:54px;">|</div><div class="a" style="left:834.00px;top:54px;letter-spacing:0.058px;">toFrame</div><div class="a" style="left:900.00px;top:54px;letter-spacing:0.283px;">1000</div><div class="a" style="left:955.50px;top:54px;letter-spacing:-0.100px;">Speed</div><div class="a" style="left:1064px;top:56px;width:1px;height:9px;background:#4b5761;"></div><div class="a" style="left:1077.00px;top:54px;letter-spacing:-0.130px;">HCurve</div><div class="a" style="left:1140.00px;top:54px;letter-spacing:-0.280px;">VCurve</div><div class="a" style="left:1200.75px;top:54px;letter-spacing:0.533px;">Info</div>
<div class="a" style="left:56.15px;top:137px;letter-spacing:0.150px;">400</div><div class="a" style="left:56.15px;top:206px;letter-spacing:0.150px;">500</div><div class="a" style="left:56.15px;top:275px;letter-spacing:0.150px;">600</div><div class="a" style="left:56.15px;top:344px;letter-spacing:0.150px;">700</div><div class="a" style="left:196.62px;top:411px;letter-spacing:0.100px;">0</div><div class="a" style="left:538.67px;top:411px;letter-spacing:0.100px;">500</div><div class="a" style="left:882.25px;top:411px;letter-spacing:0.100px;">1,000</div><div class="a" style="left:1231.85px;top:411px;letter-spacing:0.100px;">1,500</div><div class="a" style="left:70.85px;top:824px;letter-spacing:0.100px;">0</div><div class="a" style="left:35.35px;top:752px;letter-spacing:0.100px;">10,000</div><div class="a" style="left:35.35px;top:680px;letter-spacing:0.100px;">20,000</div><div class="a" style="left:35.35px;top:607px;letter-spacing:0.100px;">30,000</div><div class="a" style="left:35.35px;top:535px;letter-spacing:0.100px;">40,000</div><div class="a" style="left:35.35px;top:462px;letter-spacing:0.100px;">50,000</div><div class="a" style="left:143.25px;top:843px;letter-spacing:0.250px;">260</div><div class="a" style="left:331.35px;top:843px;letter-spacing:0.250px;">280</div><div class="a" style="left:519.58px;top:843px;letter-spacing:0.250px;">300</div><div class="a" style="left:707.67px;top:843px;letter-spacing:0.250px;">320</div><div class="a" style="left:895.77px;top:843px;letter-spacing:0.250px;">340</div><div class="a" style="left:1083.88px;top:843px;letter-spacing:0.250px;">360</div><div class="a" style="left:1271.97px;top:843px;letter-spacing:0.250px;">380</div><div class="a" style="left:744.61px;top:451px;transform:scaleX(0.9724);transform-origin:0 0;font-size:8.7px;">Curve H</div><div class="a" style="left:723.70px;top:858px;transform:scaleX(0.9294);transform-origin:0 0;font-size:8.7px;">WAVELENGTH(nm)</div><div class="a" style="left:24px;top:648px;width:9px;height:9px;font-size:8.6px;text-align:center;transform:rotate(-90deg)">Y</div>
<div class="a" style="left:22px;top:871px;width:704.5px;height:21px;background:#32414B;border-radius:0 0 2px 2px"></div><div class="a" style="left:25px;top:876px;width:10px;height:10px;background:#d9000f;border:1px solid rgba(225,170,178,.55)"></div><div class="a" style="left:27.05px;top:879px;letter-spacing:-0.750px;font-size:5.5px;font-weight:bold;color:#fff;">Sc</div><div class="a" style="left:324.80px;top:875px;letter-spacing:0.046px;">Realtime Image</div><div class="a" style="left:728px;top:870px;width:705px;height:24px;background:#505F69;border-top:2px solid #1567aa;border-radius:0 0 2px 2px"></div><div class="a" style="left:1043.25px;top:876px;letter-spacing:-0.317px;">Sequence 1</div>
<div class="a" style="left:0px;top:901px;width:1440px;height:27px;background:#32414B;"></div><div class="a" style="left:0px;top:928px;width:1440px;height:1px;background:#232f3a;"></div><div class="a" style="left:308.80px;top:909px;letter-spacing:0.121px;">Max:854 Min:0 Sum:1455818 Ave:0.8362925</div><div class="a" style="left:616.5px;top:904px;width:301.5px;height:23px;background:#19232D;border-radius:3px"></div><div class="a" style="left:710.80px;top:909px;letter-spacing:0.187px;">Accumulate:0/100</div><div class="a" style="left:923px;top:904px;width:301.5px;height:23px;background:#19232D;border-radius:3px"></div><div class="a" style="left:1022.65px;top:909px;letter-spacing:0.058px;">Sequence:0/100</div><div class="a" style="left:1234.22px;top:908px;transform:scaleX(0.9690);transform-origin:0 0;font-weight:bold;color:#b4b4b4;text-decoration:underline;text-decoration-thickness:1px;text-underline-offset:1px">SQH</div><div class="a" style="left:1272.8px;top:905px;width:103px;height:22px;background:#00c800;border-radius:2px"></div><div class="a k" style="left:1274.50px;top:909px;letter-spacing:0.250px;">Mem:6.5/15.8G</div><div class="a" style="left:1381px;top:905px;width:58px;height:22px;background:#cb0000;border-radius:2px"></div><div class="a k" style="left:1385.00px;top:909px;letter-spacing:0.100px;">connect</div>
<div class="a" style="left:0px;top:929px;width:1440px;height:7px;background:#cbe3ec;"></div><div class="a" style="left:0px;top:929px;width:1440px;height:1px;background:#d2eaf6;"></div><div class="a" style="left:36px;top:929px;width:257px;height:7px;background:#fff;border-left:1px solid #bfc3c5;border-top:1px solid #d0d0d0"></div><div class="a" style="left:265px;top:933px;width:1px;height:3px;background:#666;"></div><div class="a" style="left:487px;top:929px;width:38px;height:7px;background:#eef5f9;"></div><div class="a" style="left:525px;top:929px;width:37px;height:7px;background:#f4b27a;"></div><div class="a" style="left:562px;top:929px;width:878px;height:7px;background:linear-gradient(90deg,#cbe3ec,#d2dcea);"></div><div class="a" style="left:1435px;top:930px;width:1px;height:6px;background:#9aa0a8;"></div><div class="a" style="left:1436px;top:929px;width:4px;height:7px;background:#e2e8f0;"></div>
<svg width="1440" height="936" viewBox="0 0 1440 936"><path d="M713.3 877.4l9.4 9.4M722.7 877.4l-9.4 9.4" stroke="#8a8f93" stroke-width="1" fill="none"/><rect x="731" y="880.3" width="9.4" height="7.4" rx="1" fill="#c9bcc0"/><rect x="731.3" y="885.7" width="8.8" height="1.6" fill="#f4f0f0"/><path d="M733.4 885.7v1.6M735.2 885.7v1.6M738.2 885.7v1.6" stroke="#b5a9ad" stroke-width=".5"/><circle cx="739.1" cy="880" r="2.3" fill="#7ed67e" stroke="#3f6f4a" stroke-width=".6"/><path d="M1419.3 877.4l9.4 9.4M1428.7 877.4l-9.4 9.4" stroke="#8c8e8c" stroke-width="1" fill="none"/></svg>
</body></html>
